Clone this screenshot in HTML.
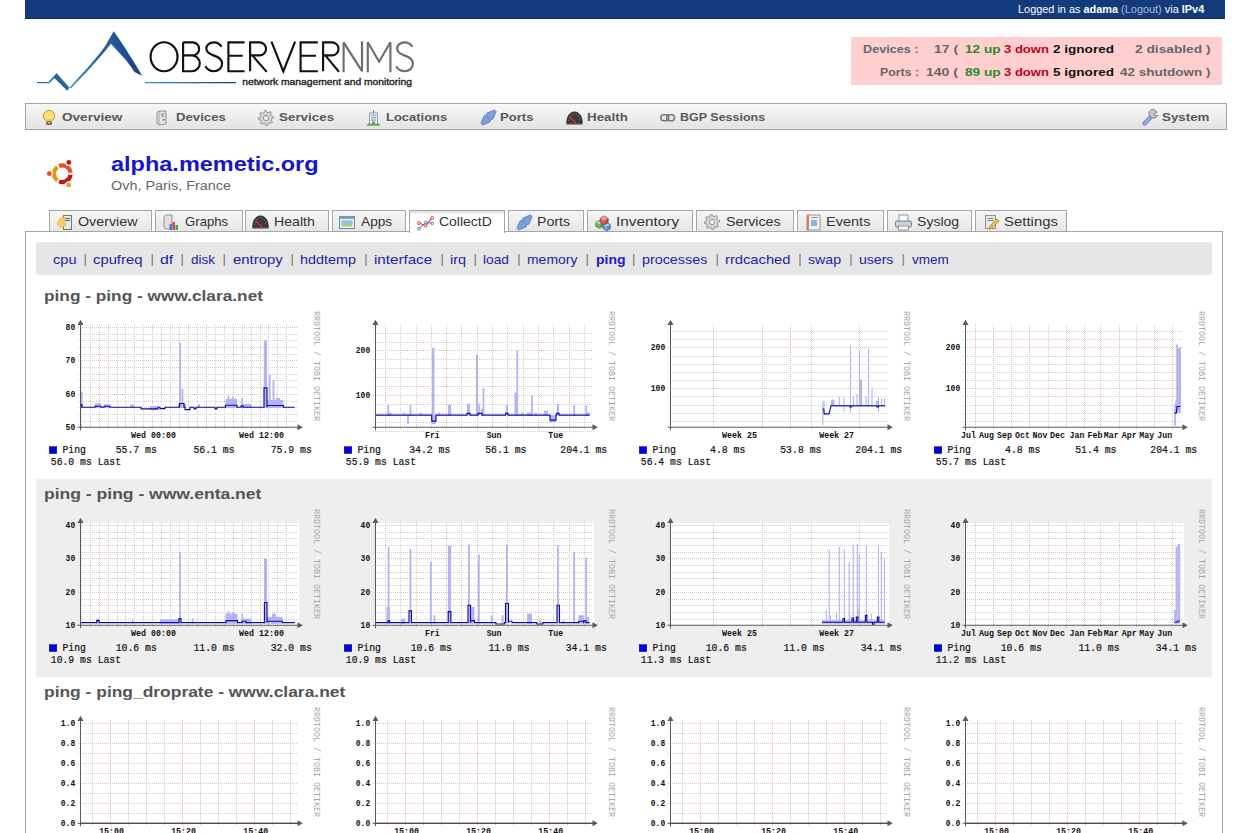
<!DOCTYPE html>
<html><head><meta charset="utf-8"><title>ObserverNMS</title>
<style>
html,body{margin:0;padding:0;background:#fff;width:1250px;height:833px;overflow:hidden;position:relative}
.t{position:absolute;white-space:pre;transform-origin:0 0}
.a{position:absolute}
</style></head><body>
<div class=a style="left:25px;top:0;width:1200px;background:#133a7a;border-bottom:1px solid #0f2a5c;height:18px"></div>
<svg class=a style="left:0;top:0" width="430" height="100" viewBox="0 0 430 100"><defs><linearGradient id="lg" x1="0" y1="0" x2="1" y2="0"><stop offset="0" stop-color="#2b86bd"/><stop offset="1" stop-color="#1b3d80"/></linearGradient><linearGradient id="ll" x1="0" y1="0" x2="1" y2="0"><stop offset="0" stop-color="#3b93c8"/><stop offset="1" stop-color="#1f3f82"/></linearGradient></defs><rect x="37" y="82" width="12" height="1.2" fill="#2a6e9e"/><path d="M48.8,81.8 L56.6,73.1 L69.5,87.8 L67.2,90.7 L54.3,78.1 L49.6,83 Z" fill="#22679d"/><path d="M69.5,87.8 C80,76 95,60 104.9,46.4 L113.7,31.2 C120,40 130,55 142.2,75.8 L134.4,72 C131,66 128,63 126.1,60.2 L110.9,43.8 C100,58 85,74 70.9,88.3 Z" fill="url(#lg)"/><rect x="145" y="82" width="91" height="1.3" fill="url(#ll)"/><ellipse cx="164.05" cy="56.75" rx="13.45" ry="14.5" fill="none" stroke="#111" stroke-width="2.15" stroke-linejoin="miter" stroke-linecap="butt"/><path d="M183.1,42.3 V71.2 H191.9 A7.9,7.9 0 0 0 191.9,55.4 H183.1 M183.1,55.4 H192.6 A6.45,6.45 0 0 0 192.6,42.3 H183.1" fill="none" stroke="#111" stroke-width="2.15" stroke-linejoin="miter" stroke-linecap="butt"/><path d="M221.6,46.8 C219.8,43.8 217.2,42.3 213.9,42.3 C209.6,42.3 206.3,44.9 206.3,48.6 C206.3,52.8 209.8,54.3 214,55.6 C218.6,57 222.1,59 222.1,63.7 C222.1,68.3 218.5,71.2 213.8,71.2 C209.8,71.2 207,69.3 205.4,66.3" fill="none" stroke="#111" stroke-width="2.15" stroke-linejoin="miter" stroke-linecap="butt"/><path d="M244.6,42.3 H228.4 V71.2 H244.6 M228.4,55.7 H242.8" fill="none" stroke="#111" stroke-width="2.15" stroke-linejoin="miter" stroke-linecap="butt"/><path d="M250.1,71.2 V42.3 H259.5 A6.45,6.45 0 0 1 259.5,55.4 H250.1 M252.3,55.4 L266.7,71.9" fill="none" stroke="#111" stroke-width="2.15" stroke-linejoin="miter" stroke-linecap="butt"/><path d="M271.5,41.6 L283.3,71.3 L295.1,41.6" fill="none" stroke="#111" stroke-width="2.15" stroke-linejoin="miter" stroke-linecap="butt"/><path d="M317.8,42.3 H300.6 V71.2 H317.8 M300.6,55.7 H316" fill="none" stroke="#111" stroke-width="2.15" stroke-linejoin="miter" stroke-linecap="butt"/><path d="M323.1,71.2 V42.3 H332 A6.45,6.45 0 0 1 332,55.4 H323.1 M325.3,55.4 L339,71.9" fill="none" stroke="#111" stroke-width="2.15" stroke-linejoin="miter" stroke-linecap="butt"/><path d="M343.6,72.3 V42.3 L362,71.2 V41.2" fill="none" stroke="#6e6e6e" stroke-width="2.15" stroke-linejoin="miter" stroke-miterlimit="2.5" stroke-linecap="butt"/><path d="M367.8,72.3 V42.3 L379.1,61.7 L390.4,42.3 V72.3" fill="none" stroke="#6e6e6e" stroke-width="2.15" stroke-linejoin="miter" stroke-miterlimit="2.5" stroke-linecap="butt"/><path d="M412.4,46.8 C410.6,43.8 408,42.3 404.7,42.3 C400.4,42.3 397.1,44.9 397.1,48.6 C397.1,52.8 400.6,54.3 404.8,55.6 C409.4,57 412.9,59 412.9,63.7 C412.9,68.3 409.3,71.2 404.6,71.2 C400.6,71.2 397.8,69.3 396.2,66.3" fill="none" stroke="#6e6e6e" stroke-width="2.15" stroke-linejoin="miter" stroke-miterlimit="2.5" stroke-linecap="butt"/><text x="242.2" y="85.4" font-family="Liberation Sans" font-weight="normal" font-size="9.6" fill="#222" stroke="#222" stroke-width="0.35" textLength="169.8" lengthAdjust="spacingAndGlyphs">network management and monitoring</text></svg>

<div class=a style="left:851px;top:37px;width:371px;height:48px;background:#ffcfcf"></div>
<div class=a style="left:25px;top:103px;width:1200px;height:25px;border:1px solid #a3a3a3;background:linear-gradient(#f7f7f7,#e3e3e3)"></div>
<div class=a style="left:25px;top:231px;width:1196px;height:620px;border:1px solid #a6a6a6;border-bottom:none"></div>
<div class=a style="left:49px;top:210px;width:101px;height:20px;border:1px solid #a6a6a6;border-bottom:none;background:linear-gradient(#f6f6f6,#e6e6e6)"></div>
<div class=a style="left:155px;top:210px;width:86px;height:20px;border:1px solid #a6a6a6;border-bottom:none;background:linear-gradient(#f6f6f6,#e6e6e6)"></div>
<div class=a style="left:245px;top:210px;width:82px;height:20px;border:1px solid #a6a6a6;border-bottom:none;background:linear-gradient(#f6f6f6,#e6e6e6)"></div>
<div class=a style="left:332px;top:210px;width:72px;height:20px;border:1px solid #a6a6a6;border-bottom:none;background:linear-gradient(#f6f6f6,#e6e6e6)"></div>
<div class=a style="left:409px;top:210px;width:94px;height:22px;border:1px solid #a6a6a6;border-bottom:none;background:linear-gradient(#dcdcdc 0px,#fff 4px)"></div>
<div class=a style="left:508px;top:210px;width:74px;height:20px;border:1px solid #a6a6a6;border-bottom:none;background:linear-gradient(#f6f6f6,#e6e6e6)"></div>
<div class=a style="left:587px;top:210px;width:104px;height:20px;border:1px solid #a6a6a6;border-bottom:none;background:linear-gradient(#f6f6f6,#e6e6e6)"></div>
<div class=a style="left:696px;top:210px;width:96px;height:20px;border:1px solid #a6a6a6;border-bottom:none;background:linear-gradient(#f6f6f6,#e6e6e6)"></div>
<div class=a style="left:797px;top:210px;width:85px;height:20px;border:1px solid #a6a6a6;border-bottom:none;background:linear-gradient(#f6f6f6,#e6e6e6)"></div>
<div class=a style="left:887px;top:210px;width:83px;height:20px;border:1px solid #a6a6a6;border-bottom:none;background:linear-gradient(#f6f6f6,#e6e6e6)"></div>
<div class=a style="left:975px;top:210px;width:90px;height:20px;border:1px solid #a6a6a6;border-bottom:none;background:linear-gradient(#f6f6f6,#e6e6e6)"></div>
<div class=a style="left:36px;top:242px;width:1176px;height:33px;background:#e6e6e6;border-radius:3px"></div>
<div class=a style="left:36px;top:479px;width:1176px;height:198px;background:#eeeeee"></div>
<svg class=a style="left:42px;top:109.5px" width="16" height="16" viewBox="0 0 16 16"><circle cx="7" cy="6" r="5.6" fill="#fbe27a" stroke="#c9932a" stroke-width="1"/><rect x="4.5" y="9" width="5" height="3" fill="#f1c928"/><rect x="4.3" y="11.5" width="5.4" height="3.3" rx="1" fill="#333"/><rect x="5.3" y="12.3" width="3.4" height="1.2" fill="#eee"/></svg>
<svg class=a style="left:155px;top:110px" width="16" height="16" viewBox="0 0 16 16"><path d="M2,2.5 L4,1 H11 V14 L4,15 L2,13.5 Z" fill="#e4e4e4" stroke="#8a8a8a" stroke-width="0.9"/><path d="M4,1 V15" stroke="#9a9a9a" stroke-width="0.8"/><rect x="6" y="3.5" width="3.5" height="0.9" fill="#777"/><rect x="6" y="5.5" width="3.5" height="0.9" fill="#777"/><rect x="7.8" y="9" width="1.6" height="1.6" fill="#666"/></svg>
<svg class=a style="left:257.5px;top:110px" width="16" height="16" viewBox="0 0 16 16"><polygon points="15.45,6.49 15.60,7.97 13.50,9.07 13.18,10.12 14.33,12.20 13.39,13.35 11.13,12.64 10.16,13.17 9.51,15.45 8.03,15.60 6.93,13.50 5.88,13.18 3.80,14.33 2.65,13.39 3.36,11.13 2.83,10.16 0.55,9.51 0.40,8.03 2.50,6.93 2.82,5.88 1.67,3.80 2.61,2.65 4.87,3.36 5.84,2.83 6.49,0.55 7.97,0.40 9.07,2.50 10.12,2.82 12.20,1.67 13.35,2.61 12.64,4.87 13.17,5.84" fill="#d8d8d8" stroke="#8f8f8f" stroke-width="1"/><circle cx="8" cy="8" r="2.6" fill="#f4f4f4" stroke="#8f8f8f" stroke-width="1"/></svg>
<svg class=a style="left:366px;top:109.5px" width="16" height="17" viewBox="0 0 16 17"><rect x="7" y="0.5" width="1" height="3" fill="#555"/><rect x="3.5" y="3" width="8" height="11" fill="#f2f6fb" stroke="#8a96a8" stroke-width="0.9"/><rect x="4.8" y="4.6" width="5.4" height="1.3" fill="#7fa6d8"/><rect x="4.8" y="7" width="5.4" height="1.3" fill="#7fa6d8"/><rect x="4.8" y="9.4" width="5.4" height="1.3" fill="#7fa6d8"/><rect x="6" y="11.5" width="3" height="2.5" fill="#8a8a8a"/><path d="M0.5,15.8 L3.5,12 V14 H11.5 V12 L14.5,15.8 Z" fill="#5fae4c"/></svg>
<svg class=a style="left:479.5px;top:109px" width="17" height="17" viewBox="0 0 17 17"><polygon points="2.63,16.07 4.54,15.29 10.13,12.81 10.62,10.62 12.81,10.13 15.29,4.54 16.07,2.63 14.37,0.93 12.46,1.71 6.87,4.19 6.38,6.38 4.19,6.87 1.71,12.46 0.93,14.37" fill="#7f9fe2" stroke="#4f6fb8" stroke-width="0.8" stroke-linejoin="round"/><path d="M6.6,7.2 L9.8,10.4" stroke="#5a8a88" stroke-width="1"/></svg>
<svg class=a style="left:565.5px;top:110px" width="17" height="16" viewBox="0 0 17 16"><path d="M0.8,13.2 C0.8,6 4,2 8.5,2 C13,2 16.2,6 16.2,13.2 Z" fill="#3c3c3c" stroke="#222" stroke-width="0.9"/><path d="M3,11 C3,6.5 5.3,4 8.5,4 C11.7,4 14,6.5 14,11" fill="none" stroke="#999" stroke-width="0.7" stroke-dasharray="0.8 1.4"/><path d="M3.5,6.5 L10,13" stroke="#e03030" stroke-width="1.3"/><rect x="0.5" y="13" width="16" height="1.6" fill="#555"/></svg>
<svg class=a style="left:660px;top:109.5px" width="16" height="16" viewBox="0 0 16 16"><rect x="0.8" y="4.8" width="8" height="6" rx="3" fill="none" stroke="#777" stroke-width="1.5"/><rect x="6.5" y="4.8" width="8" height="6" rx="3" fill="none" stroke="#777" stroke-width="1.5"/></svg>
<svg class=a style="left:1141.5px;top:109px" width="17" height="17" viewBox="0 0 17 17"><path d="M2.5,14.5 L9.5,7.5" stroke="#5c7fc7" stroke-width="4" stroke-linecap="round"/><path d="M2.5,14.5 L9.5,7.5" stroke="#9db4ea" stroke-width="2.2" stroke-linecap="round"/><path d="M9,8 A4,4 0 1 1 14.8,3.8 L12.5,4.6 L12,6 L13.5,7 L15.6,6 A4,4 0 0 1 9,8 Z" fill="#c8c8c8" stroke="#7b7b7b" stroke-width="0.9"/></svg>
<svg class=a style="left:56px;top:213.5px" width="17" height="17" viewBox="0 0 17 17"><rect x="7.5" y="1.5" width="8" height="14" fill="#e3e8e6" stroke="#777" stroke-width="1"/><rect x="9" y="4" width="5" height="1" fill="#666"/><rect x="9" y="6" width="5" height="1" fill="#666"/><path d="M1,10 L5,3.5 L9.5,4 L8,8 L10,11 L5,14 Z" fill="#f3d060" stroke="#e0b840" stroke-width="0.8"/></svg>
<svg class=a style="left:162.5px;top:213.5px" width="17" height="17" viewBox="0 0 17 17"><path d="M1,2.5 L3,1 H9 V14 L3,15 L1,13.5 Z" fill="#e0e0e0" stroke="#8a8a8a" stroke-width="0.9"/><rect x="6.5" y="10" width="2.5" height="6" fill="#3a7ee0"/><rect x="9.5" y="8" width="2.5" height="8" fill="#e04040"/><rect x="12.5" y="11" width="2.5" height="5" fill="#3cb34a"/></svg>
<svg class=a style="left:252px;top:214px" width="17" height="16" viewBox="0 0 17 16"><path d="M0.8,13.2 C0.8,6 4,2 8.5,2 C13,2 16.2,6 16.2,13.2 Z" fill="#3c3c3c" stroke="#222" stroke-width="0.9"/><path d="M3,11 C3,6.5 5.3,4 8.5,4 C11.7,4 14,6.5 14,11" fill="none" stroke="#999" stroke-width="0.7" stroke-dasharray="0.8 1.4"/><path d="M3.5,6.5 L10,13" stroke="#e03030" stroke-width="1.3"/><rect x="0.5" y="13" width="16" height="1.6" fill="#555"/></svg>
<svg class=a style="left:339px;top:213.5px" width="16" height="16" viewBox="0 0 16 16"><rect x="0.5" y="2.5" width="15" height="12" fill="#f4f4f4" stroke="#6f88aa" stroke-width="1"/><rect x="0.5" y="2.5" width="15" height="2.5" fill="#7f9cc8"/><rect x="2.5" y="6.5" width="11" height="6" fill="#9fd08a"/><rect x="2.5" y="6.5" width="11" height="3" fill="#8cc0e8"/></svg>
<svg class=a style="left:416.5px;top:213.5px" width="17" height="17" viewBox="0 0 17 17"><path d="M2,14.7 L8.7,8.4 L15.2,9.2" fill="none" stroke="#4a70c0" stroke-width="1"/><path d="M2,9.1 L8.7,11.7 L15.2,3.9" fill="none" stroke="#dd3a3a" stroke-width="1.1"/><circle cx="2" cy="14.7" r="1.3" fill="#fff" stroke="#4a70c0" stroke-width="0.9"/><circle cx="8.7" cy="8.4" r="1.3" fill="#fff" stroke="#4a70c0" stroke-width="0.9"/><circle cx="15.2" cy="9.2" r="1.3" fill="#fff" stroke="#4a70c0" stroke-width="0.9"/><circle cx="2" cy="9.1" r="1.4" fill="#fff" stroke="#dd3a3a" stroke-width="1"/><circle cx="8.7" cy="11.7" r="1.4" fill="#fff" stroke="#dd3a3a" stroke-width="1"/><circle cx="15.2" cy="3.9" r="1.4" fill="#fff" stroke="#dd3a3a" stroke-width="1"/></svg>
<svg class=a style="left:515.5px;top:213.5px" width="17" height="17" viewBox="0 0 17 17"><polygon points="2.63,16.07 4.54,15.29 10.13,12.81 10.62,10.62 12.81,10.13 15.29,4.54 16.07,2.63 14.37,0.93 12.46,1.71 6.87,4.19 6.38,6.38 4.19,6.87 1.71,12.46 0.93,14.37" fill="#7f9fe2" stroke="#4f6fb8" stroke-width="0.8" stroke-linejoin="round"/><path d="M6.6,7.2 L9.8,10.4" stroke="#5a8a88" stroke-width="1"/></svg>
<svg class=a style="left:594.5px;top:213.5px" width="17" height="18" viewBox="0 0 17 18"><polygon points="4.30,6.10 7.95,8.20 4.30,10.30 0.65,8.20" fill="#a8dca0"/><polygon points="0.65,8.20 4.30,10.30 4.30,14.50 0.65,12.40" fill="#6cb860"/><polygon points="4.30,10.30 7.95,8.20 7.95,12.40 4.30,14.50" fill="#58a04c"/><polygon points="4.30,6.10 7.95,8.20 7.95,12.40 4.30,14.50 0.65,12.40 0.65,8.20" fill="none" stroke="#4a8a40" stroke-width="0.7"/><polygon points="11.60,8.30 15.34,10.45 11.60,12.60 7.86,10.45" fill="#a8c8f0"/><polygon points="7.86,10.45 11.60,12.60 11.60,16.90 7.86,14.75" fill="#6f9fd8"/><polygon points="11.60,12.60 15.34,10.45 15.34,14.75 11.60,16.90" fill="#5a88c4"/><polygon points="11.60,8.30 15.34,10.45 15.34,14.75 11.60,16.90 7.86,14.75 7.86,10.45" fill="none" stroke="#3f6aa0" stroke-width="0.7"/><polygon points="9.20,1.90 13.11,4.15 9.20,6.40 5.28,4.15" fill="#f4a0a0"/><polygon points="5.28,4.15 9.20,6.40 9.20,10.90 5.28,8.65" fill="#e05a5a"/><polygon points="9.20,6.40 13.11,4.15 13.11,8.65 9.20,10.90" fill="#c84848"/><polygon points="9.20,1.90 13.11,4.15 13.11,8.65 9.20,10.90 5.28,8.65 5.28,4.15" fill="none" stroke="#a03030" stroke-width="0.7"/></svg>
<svg class=a style="left:704px;top:214px" width="16" height="16" viewBox="0 0 16 16"><polygon points="15.45,6.49 15.60,7.97 13.50,9.07 13.18,10.12 14.33,12.20 13.39,13.35 11.13,12.64 10.16,13.17 9.51,15.45 8.03,15.60 6.93,13.50 5.88,13.18 3.80,14.33 2.65,13.39 3.36,11.13 2.83,10.16 0.55,9.51 0.40,8.03 2.50,6.93 2.82,5.88 1.67,3.80 2.61,2.65 4.87,3.36 5.84,2.83 6.49,0.55 7.97,0.40 9.07,2.50 10.12,2.82 12.20,1.67 13.35,2.61 12.64,4.87 13.17,5.84" fill="#d8d8d8" stroke="#8f8f8f" stroke-width="1"/><circle cx="8" cy="8" r="2.6" fill="#f4f4f4" stroke="#8f8f8f" stroke-width="1"/></svg>
<svg class=a style="left:806px;top:213.5px" width="15" height="17" viewBox="0 0 15 17"><rect x="1" y="1" width="13" height="15" fill="#eef2f6" stroke="#8a8a8a" stroke-width="0.9"/><rect x="1" y="1" width="2" height="15" fill="#d88040"/><rect x="5" y="6" width="6" height="6" fill="#8ab4e0"/><rect x="5" y="3" width="7" height="1" fill="#999"/></svg>
<svg class=a style="left:894.5px;top:213.5px" width="17" height="17" viewBox="0 0 17 17"><rect x="4" y="1" width="9" height="7" fill="#fff" stroke="#888" stroke-width="0.9"/><rect x="0.5" y="7" width="16" height="6" rx="1.5" fill="#c8d4e0" stroke="#6a7a8a" stroke-width="1"/><rect x="3.5" y="12" width="10" height="4" fill="#fff" stroke="#888" stroke-width="0.9"/></svg>
<svg class=a style="left:983.5px;top:213.5px" width="16" height="17" viewBox="0 0 16 17"><rect x="1.5" y="1.5" width="10" height="13" fill="#e8e8e8" stroke="#888" stroke-width="0.9"/><rect x="3.5" y="4" width="6" height="1" fill="#888"/><rect x="3.5" y="6" width="6" height="1" fill="#888"/><path d="M5,15.5 L6,12 L13,5 L15,7 L8,14 Z" fill="#f0c040" stroke="#b08020" stroke-width="0.8"/></svg>
<svg class=a style="left:46px;top:159px" width="32" height="30" viewBox="0 0 32 30"><path d="M13.06,7.06 A8.3,8.3 0 0 1 24.54,13.69" fill="none" stroke="#e4541c" stroke-width="4.2"/><path d="M24.54,15.71 A8.3,8.3 0 0 1 13.06,22.34" fill="none" stroke="#c81414" stroke-width="4.2"/><path d="M11.30,21.33 A8.3,8.3 0 0 1 11.30,8.07" fill="none" stroke="#f39012" stroke-width="4.2"/><circle cx="3.30" cy="14.70" r="3.6" fill="#fff"/><circle cx="3.30" cy="14.70" r="2.4" fill="#e24c1c"/><circle cx="22.80" cy="3.44" r="3.6" fill="#fff"/><circle cx="22.80" cy="3.44" r="2.4" fill="#cc1212"/><circle cx="22.80" cy="25.96" r="3.6" fill="#fff"/><circle cx="22.80" cy="25.96" r="2.4" fill="#f0a020"/></svg>
<svg class=a style="left:0;top:0" width="1250" height="833" viewBox="0 0 1250 833" shape-rendering="auto">
<rect x="80.5" y="325.0" width="218.5" height="102.30000000000001" fill="#fff"/>
<path d="M78,421.50H298.0" stroke="#cfcfcf" stroke-width="1" stroke-dasharray="1 1"/>
<path d="M78,414.50H298.0" stroke="#cfcfcf" stroke-width="1" stroke-dasharray="1 1"/>
<path d="M78,407.50H298.0" stroke="#cfcfcf" stroke-width="1" stroke-dasharray="1 1"/>
<path d="M78,401.50H298.0" stroke="#cfcfcf" stroke-width="1" stroke-dasharray="1 1"/>
<path d="M78,387.50H298.0" stroke="#cfcfcf" stroke-width="1" stroke-dasharray="1 1"/>
<path d="M78,380.50H298.0" stroke="#cfcfcf" stroke-width="1" stroke-dasharray="1 1"/>
<path d="M78,374.50H298.0" stroke="#cfcfcf" stroke-width="1" stroke-dasharray="1 1"/>
<path d="M78,367.50H298.0" stroke="#cfcfcf" stroke-width="1" stroke-dasharray="1 1"/>
<path d="M78,354.50H298.0" stroke="#cfcfcf" stroke-width="1" stroke-dasharray="1 1"/>
<path d="M78,347.50H298.0" stroke="#cfcfcf" stroke-width="1" stroke-dasharray="1 1"/>
<path d="M78,340.50H298.0" stroke="#cfcfcf" stroke-width="1" stroke-dasharray="1 1"/>
<path d="M78,334.50H298.0" stroke="#cfcfcf" stroke-width="1" stroke-dasharray="1 1"/>
<path d="M81.50,324V429.3" stroke="#cfcfcf" stroke-width="1" stroke-dasharray="1 1"/>
<path d="M90.50,324V429.3" stroke="#cfcfcf" stroke-width="1" stroke-dasharray="1 1"/>
<path d="M108.50,324V429.3" stroke="#cfcfcf" stroke-width="1" stroke-dasharray="1 1"/>
<path d="M117.50,324V429.3" stroke="#cfcfcf" stroke-width="1" stroke-dasharray="1 1"/>
<path d="M125.50,324V429.3" stroke="#cfcfcf" stroke-width="1" stroke-dasharray="1 1"/>
<path d="M134.50,324V429.3" stroke="#cfcfcf" stroke-width="1" stroke-dasharray="1 1"/>
<path d="M143.50,324V429.3" stroke="#cfcfcf" stroke-width="1" stroke-dasharray="1 1"/>
<path d="M161.50,324V429.3" stroke="#cfcfcf" stroke-width="1" stroke-dasharray="1 1"/>
<path d="M170.50,324V429.3" stroke="#cfcfcf" stroke-width="1" stroke-dasharray="1 1"/>
<path d="M179.50,324V429.3" stroke="#cfcfcf" stroke-width="1" stroke-dasharray="1 1"/>
<path d="M188.50,324V429.3" stroke="#cfcfcf" stroke-width="1" stroke-dasharray="1 1"/>
<path d="M197.50,324V429.3" stroke="#cfcfcf" stroke-width="1" stroke-dasharray="1 1"/>
<path d="M215.50,324V429.3" stroke="#cfcfcf" stroke-width="1" stroke-dasharray="1 1"/>
<path d="M224.50,324V429.3" stroke="#cfcfcf" stroke-width="1" stroke-dasharray="1 1"/>
<path d="M233.50,324V429.3" stroke="#cfcfcf" stroke-width="1" stroke-dasharray="1 1"/>
<path d="M242.50,324V429.3" stroke="#cfcfcf" stroke-width="1" stroke-dasharray="1 1"/>
<path d="M251.50,324V429.3" stroke="#cfcfcf" stroke-width="1" stroke-dasharray="1 1"/>
<path d="M268.50,324V429.3" stroke="#cfcfcf" stroke-width="1" stroke-dasharray="1 1"/>
<path d="M277.50,324V429.3" stroke="#cfcfcf" stroke-width="1" stroke-dasharray="1 1"/>
<path d="M286.50,324V429.3" stroke="#cfcfcf" stroke-width="1" stroke-dasharray="1 1"/>
<path d="M78,394.50H298.0" stroke="#e6bebe" stroke-width="1" stroke-dasharray="1 1"/>
<path d="M78,360.50H298.0" stroke="#e6bebe" stroke-width="1" stroke-dasharray="1 1"/>
<path d="M78,327.50H298.0" stroke="#e6bebe" stroke-width="1" stroke-dasharray="1 1"/>
<path d="M99.50,324V430.3" stroke="#e6bebe" stroke-width="1" stroke-dasharray="1 1"/>
<path d="M152.50,324V430.3" stroke="#e6bebe" stroke-width="1" stroke-dasharray="1 1"/>
<path d="M206.50,324V430.3" stroke="#e6bebe" stroke-width="1" stroke-dasharray="1 1"/>
<path d="M260.50,324V430.3" stroke="#e6bebe" stroke-width="1" stroke-dasharray="1 1"/>
<rect x="80.75" y="391.86" width="1.80" height="16.05" fill="#b3b3ee"/>
<rect x="95.00" y="403.23" width="6.00" height="4.68" fill="#b3b3ee"/>
<rect x="104.00" y="404.23" width="6.00" height="3.68" fill="#b3b3ee"/>
<rect x="130.00" y="404.57" width="4.00" height="3.34" fill="#b3b3ee"/>
<rect x="150.00" y="405.90" width="8.00" height="4.01" fill="#b3b3ee"/>
<rect x="179.25" y="342.71" width="1.80" height="65.20" fill="#b3b3ee"/>
<rect x="181.60" y="388.85" width="1.80" height="19.06" fill="#b3b3ee"/>
<rect x="178.00" y="403.90" width="8.00" height="4.01" fill="#b3b3ee"/>
<rect x="198.00" y="404.23" width="2.00" height="3.68" fill="#b3b3ee"/>
<rect x="225.50" y="398.88" width="11.50" height="9.03" fill="#b3b3ee"/>
<rect x="227.60" y="395.54" width="1.80" height="12.37" fill="#b3b3ee"/>
<rect x="231.60" y="396.54" width="1.80" height="11.37" fill="#b3b3ee"/>
<rect x="241.20" y="397.88" width="1.80" height="10.03" fill="#b3b3ee"/>
<rect x="243.00" y="403.90" width="8.50" height="4.01" fill="#b3b3ee"/>
<rect x="263.80" y="340.37" width="3.20" height="67.54" fill="#b3b3ee"/>
<rect x="268.80" y="374.48" width="1.80" height="33.43" fill="#b3b3ee"/>
<rect x="272.60" y="380.49" width="1.80" height="27.42" fill="#b3b3ee"/>
<rect x="267.00" y="399.88" width="16.50" height="8.02" fill="#b3b3ee"/>
<rect x="276.00" y="397.88" width="4.00" height="10.03" fill="#b3b3ee"/>
<polyline points="80.80,407.24 80.80,407.24 80.80,404.57 82.00,404.57 82.00,407.24 95.00,407.24 95.00,406.24 101.00,406.24 101.00,407.24 104.00,407.24 104.00,406.24 110.00,406.24 110.00,407.24 141.00,407.24 141.00,408.91 158.00,408.91 158.00,407.24 160.00,407.24 160.00,408.58 165.00,408.58 165.00,407.24 179.50,407.24 179.50,403.56 184.00,403.56 184.00,407.24 185.00,407.24 185.00,409.58 190.00,409.58 190.00,407.24 194.00,407.24 194.00,408.91 196.00,408.91 196.00,407.24 215.00,407.24 215.00,408.91 217.00,408.91 217.00,407.24 225.50,407.24 225.50,405.23 237.00,405.23 237.00,407.24 241.00,407.24 241.00,405.90 243.00,405.90 243.00,407.24 264.00,407.24 264.00,387.85 267.00,387.85 267.00,407.24 267.00,407.24 267.00,405.57 283.50,405.57 283.50,407.24 294.60,407.24" fill="none" stroke="#0a0aa8" stroke-width="1.1" stroke-linejoin="miter"/>

<path d="M80.5,430.3V323.5" stroke="#5a5a5a" stroke-width="1"/>
<path d="M77.5,427.3H299.5" stroke="#5a5a5a" stroke-width="1.1"/>
<path d="M77.5,325.0L80.5,319.8L83.5,325.0Z" fill="#5a5a5a"/>
<path d="M297.5,424.3L302.8,427.3L297.5,430.3Z" fill="#5a5a5a"/>
<text x="75.2" y="329.90" text-anchor="end" font-family="Liberation Mono" font-weight="bold" font-size="8.6" fill="#111" textLength="9.6" lengthAdjust="spacingAndGlyphs">80</text>
<text x="75.2" y="363.33" text-anchor="end" font-family="Liberation Mono" font-weight="bold" font-size="8.6" fill="#111" textLength="9.6" lengthAdjust="spacingAndGlyphs">70</text>
<text x="75.2" y="396.77" text-anchor="end" font-family="Liberation Mono" font-weight="bold" font-size="8.6" fill="#111" textLength="9.6" lengthAdjust="spacingAndGlyphs">60</text>
<text x="75.2" y="430.20" text-anchor="end" font-family="Liberation Mono" font-weight="bold" font-size="8.6" fill="#111" textLength="9.6" lengthAdjust="spacingAndGlyphs">50</text>
<text x="131.09" y="437.90" font-family="Liberation Mono" font-weight="bold" font-size="8.3" fill="#111" textLength="44.8" lengthAdjust="spacingAndGlyphs">Wed 00:00</text>
<text x="239.09" y="437.90" font-family="Liberation Mono" font-weight="bold" font-size="8.3" fill="#111" textLength="44.8" lengthAdjust="spacingAndGlyphs">Wed 12:00</text>
<text transform="translate(314.2,311.0) rotate(90)" font-family="Liberation Mono" font-size="8.3" fill="#a8a8a8" textLength="110" lengthAdjust="spacingAndGlyphs">RRDTOOL / TOBI OETIKER</text>
<rect x="49.2" y="446.6" width="7.6" height="7" fill="#0000e6" stroke="#000080" stroke-width="0.4"/>
<text x="62.40" y="453.40" font-family="Liberation Mono" font-size="10.6" fill="#111" stroke="#111" stroke-width="0.2" textLength="23.5" lengthAdjust="spacingAndGlyphs">Ping</text>
<text x="115.70" y="453.40" font-family="Liberation Mono" font-size="10.6" fill="#111" stroke="#111" stroke-width="0.2" textLength="41.2" lengthAdjust="spacingAndGlyphs">55.7 ms</text>
<text x="193.40" y="453.40" font-family="Liberation Mono" font-size="10.6" fill="#111" stroke="#111" stroke-width="0.2" textLength="41.2" lengthAdjust="spacingAndGlyphs">56.1 ms</text>
<text x="270.70" y="453.40" font-family="Liberation Mono" font-size="10.6" fill="#111" stroke="#111" stroke-width="0.2" textLength="41.2" lengthAdjust="spacingAndGlyphs">75.9 ms</text>
<text x="50.80" y="465.10" font-family="Liberation Mono" font-size="10.6" fill="#111" stroke="#111" stroke-width="0.2" textLength="70.3" lengthAdjust="spacingAndGlyphs">56.0 ms Last</text>
<rect x="375.5" y="325.0" width="218.5" height="102.30000000000001" fill="#fff"/>
<path d="M373,431.50H593.0" stroke="#cfcfcf" stroke-width="1" stroke-dasharray="1 1"/>
<path d="M373,422.50H593.0" stroke="#cfcfcf" stroke-width="1" stroke-dasharray="1 1"/>
<path d="M373,413.50H593.0" stroke="#cfcfcf" stroke-width="1" stroke-dasharray="1 1"/>
<path d="M373,404.50H593.0" stroke="#cfcfcf" stroke-width="1" stroke-dasharray="1 1"/>
<path d="M373,386.50H593.0" stroke="#cfcfcf" stroke-width="1" stroke-dasharray="1 1"/>
<path d="M373,377.50H593.0" stroke="#cfcfcf" stroke-width="1" stroke-dasharray="1 1"/>
<path d="M373,368.50H593.0" stroke="#cfcfcf" stroke-width="1" stroke-dasharray="1 1"/>
<path d="M373,359.50H593.0" stroke="#cfcfcf" stroke-width="1" stroke-dasharray="1 1"/>
<path d="M373,342.50H593.0" stroke="#cfcfcf" stroke-width="1" stroke-dasharray="1 1"/>
<path d="M373,333.50H593.0" stroke="#cfcfcf" stroke-width="1" stroke-dasharray="1 1"/>
<path d="M400.50,324V429.3" stroke="#cfcfcf" stroke-width="1" stroke-dasharray="1 1"/>
<path d="M431.50,324V429.3" stroke="#cfcfcf" stroke-width="1" stroke-dasharray="1 1"/>
<path d="M461.50,324V429.3" stroke="#cfcfcf" stroke-width="1" stroke-dasharray="1 1"/>
<path d="M492.50,324V429.3" stroke="#cfcfcf" stroke-width="1" stroke-dasharray="1 1"/>
<path d="M523.50,324V429.3" stroke="#cfcfcf" stroke-width="1" stroke-dasharray="1 1"/>
<path d="M553.50,324V429.3" stroke="#cfcfcf" stroke-width="1" stroke-dasharray="1 1"/>
<path d="M584.50,324V429.3" stroke="#cfcfcf" stroke-width="1" stroke-dasharray="1 1"/>
<path d="M373,395.50H593.0" stroke="#e6bebe" stroke-width="1" stroke-dasharray="1 1"/>
<path d="M373,350.50H593.0" stroke="#e6bebe" stroke-width="1" stroke-dasharray="1 1"/>
<path d="M385.50,324V430.3" stroke="#e6bebe" stroke-width="1" stroke-dasharray="1 1"/>
<path d="M416.50,324V430.3" stroke="#e6bebe" stroke-width="1" stroke-dasharray="1 1"/>
<path d="M446.50,324V430.3" stroke="#e6bebe" stroke-width="1" stroke-dasharray="1 1"/>
<path d="M477.50,324V430.3" stroke="#e6bebe" stroke-width="1" stroke-dasharray="1 1"/>
<path d="M507.50,324V430.3" stroke="#e6bebe" stroke-width="1" stroke-dasharray="1 1"/>
<path d="M538.50,324V430.3" stroke="#e6bebe" stroke-width="1" stroke-dasharray="1 1"/>
<path d="M569.50,324V430.3" stroke="#e6bebe" stroke-width="1" stroke-dasharray="1 1"/>
<rect x="387.35" y="404.84" width="1.80" height="10.56" fill="#b3b3ee"/>
<rect x="386.80" y="412.70" width="4.80" height="2.70" fill="#b3b3ee"/>
<rect x="402.85" y="412.48" width="1.80" height="2.92" fill="#b3b3ee"/>
<rect x="409.60" y="404.84" width="1.80" height="10.56" fill="#b3b3ee"/>
<rect x="419.85" y="412.48" width="1.80" height="2.92" fill="#b3b3ee"/>
<rect x="432.00" y="347.80" width="2.50" height="67.60" fill="#b3b3ee"/>
<rect x="438.35" y="412.48" width="1.80" height="2.92" fill="#b3b3ee"/>
<rect x="448.00" y="404.84" width="3.00" height="10.56" fill="#b3b3ee"/>
<rect x="467.00" y="403.49" width="3.00" height="11.90" fill="#b3b3ee"/>
<rect x="476.00" y="354.98" width="2.00" height="60.41" fill="#b3b3ee"/>
<rect x="478.35" y="403.49" width="1.80" height="11.90" fill="#b3b3ee"/>
<rect x="482.60" y="387.77" width="1.80" height="27.62" fill="#b3b3ee"/>
<rect x="481.00" y="408.88" width="2.00" height="6.51" fill="#b3b3ee"/>
<rect x="506.00" y="404.84" width="2.00" height="10.56" fill="#b3b3ee"/>
<rect x="514.50" y="392.71" width="3.00" height="22.68" fill="#b3b3ee"/>
<rect x="516.35" y="350.94" width="1.80" height="64.46" fill="#b3b3ee"/>
<rect x="520.85" y="412.48" width="1.80" height="2.92" fill="#b3b3ee"/>
<rect x="527.00" y="412.48" width="5.00" height="2.92" fill="#b3b3ee"/>
<rect x="531.10" y="395.41" width="1.80" height="19.99" fill="#b3b3ee"/>
<rect x="534.85" y="412.48" width="1.80" height="2.92" fill="#b3b3ee"/>
<rect x="544.00" y="410.68" width="4.00" height="4.72" fill="#b3b3ee"/>
<rect x="557.00" y="404.39" width="2.00" height="11.00" fill="#b3b3ee"/>
<rect x="573.35" y="405.29" width="1.80" height="10.11" fill="#b3b3ee"/>
<rect x="585.35" y="405.29" width="1.80" height="10.11" fill="#b3b3ee"/>
<rect x="586.00" y="412.48" width="4.00" height="2.92" fill="#b3b3ee"/>
<rect x="407.10" y="415.17" width="1.80" height="8.53" fill="#b3b3ee"/>
<rect x="431.50" y="415.17" width="4.50" height="8.98" fill="#b3b3ee"/>
<rect x="550.00" y="415.17" width="6.00" height="7.19" fill="#b3b3ee"/>
<polyline points="376.00,415.08 431.70,415.08 431.70,421.10 436.00,421.10 436.00,415.08 467.00,415.08 467.00,413.38 470.00,413.38 470.00,415.08 478.00,415.08 478.00,413.38 482.00,413.38 482.00,415.08 505.50,415.08 505.50,413.38 508.00,413.38 508.00,415.08 550.00,415.08 550.00,420.11 556.00,420.11 556.00,415.08 556.50,415.08 556.50,413.38 559.00,413.38 559.00,415.08 589.60,415.08" fill="none" stroke="#0a0aa8" stroke-width="1.1" stroke-linejoin="miter"/>

<path d="M375.5,430.3V323.5" stroke="#5a5a5a" stroke-width="1"/>
<path d="M372.5,427.3H594.5" stroke="#5a5a5a" stroke-width="1.1"/>
<path d="M372.5,325.0L375.5,319.8L378.5,325.0Z" fill="#5a5a5a"/>
<path d="M592.5,424.3L597.8,427.3L592.5,430.3Z" fill="#5a5a5a"/>
<text x="370.2" y="353.39" text-anchor="end" font-family="Liberation Mono" font-weight="bold" font-size="8.6" fill="#111" textLength="14.4" lengthAdjust="spacingAndGlyphs">200</text>
<text x="370.2" y="398.31" text-anchor="end" font-family="Liberation Mono" font-weight="bold" font-size="8.6" fill="#111" textLength="14.4" lengthAdjust="spacingAndGlyphs">100</text>
<text x="424.93" y="437.90" font-family="Liberation Mono" font-weight="bold" font-size="8.3" fill="#111" textLength="14.9" lengthAdjust="spacingAndGlyphs">Fri</text>
<text x="486.63" y="437.90" font-family="Liberation Mono" font-weight="bold" font-size="8.3" fill="#111" textLength="14.9" lengthAdjust="spacingAndGlyphs">Sun</text>
<text x="548.23" y="437.90" font-family="Liberation Mono" font-weight="bold" font-size="8.3" fill="#111" textLength="14.9" lengthAdjust="spacingAndGlyphs">Tue</text>
<text transform="translate(609.2,311.0) rotate(90)" font-family="Liberation Mono" font-size="8.3" fill="#a8a8a8" textLength="110" lengthAdjust="spacingAndGlyphs">RRDTOOL / TOBI OETIKER</text>
<rect x="344.2" y="446.6" width="7.6" height="7" fill="#0000e6" stroke="#000080" stroke-width="0.4"/>
<text x="357.40" y="453.40" font-family="Liberation Mono" font-size="10.6" fill="#111" stroke="#111" stroke-width="0.2" textLength="23.5" lengthAdjust="spacingAndGlyphs">Ping</text>
<text x="409.14" y="453.40" font-family="Liberation Mono" font-size="10.6" fill="#111" stroke="#111" stroke-width="0.2" textLength="41.2" lengthAdjust="spacingAndGlyphs">34.2 ms</text>
<text x="485.24" y="453.40" font-family="Liberation Mono" font-size="10.6" fill="#111" stroke="#111" stroke-width="0.2" textLength="41.2" lengthAdjust="spacingAndGlyphs">56.1 ms</text>
<text x="560.26" y="453.40" font-family="Liberation Mono" font-size="10.6" fill="#111" stroke="#111" stroke-width="0.2" textLength="47.0" lengthAdjust="spacingAndGlyphs">204.1 ms</text>
<text x="345.80" y="465.10" font-family="Liberation Mono" font-size="10.6" fill="#111" stroke="#111" stroke-width="0.2" textLength="70.3" lengthAdjust="spacingAndGlyphs">55.9 ms Last</text>
<rect x="670.5" y="325.0" width="218.5" height="102.30000000000001" fill="#fff"/>
<path d="M668,421.50H888.0" stroke="#cfcfcf" stroke-width="1" stroke-dasharray="1 1"/>
<path d="M668,413.50H888.0" stroke="#cfcfcf" stroke-width="1" stroke-dasharray="1 1"/>
<path d="M668,405.50H888.0" stroke="#cfcfcf" stroke-width="1" stroke-dasharray="1 1"/>
<path d="M668,396.50H888.0" stroke="#cfcfcf" stroke-width="1" stroke-dasharray="1 1"/>
<path d="M668,380.50H888.0" stroke="#cfcfcf" stroke-width="1" stroke-dasharray="1 1"/>
<path d="M668,372.50H888.0" stroke="#cfcfcf" stroke-width="1" stroke-dasharray="1 1"/>
<path d="M668,364.50H888.0" stroke="#cfcfcf" stroke-width="1" stroke-dasharray="1 1"/>
<path d="M668,356.50H888.0" stroke="#cfcfcf" stroke-width="1" stroke-dasharray="1 1"/>
<path d="M668,339.50H888.0" stroke="#cfcfcf" stroke-width="1" stroke-dasharray="1 1"/>
<path d="M668,331.50H888.0" stroke="#cfcfcf" stroke-width="1" stroke-dasharray="1 1"/>
<path d="M713.50,324V429.3" stroke="#cfcfcf" stroke-width="1" stroke-dasharray="1 1"/>
<path d="M762.50,324V429.3" stroke="#cfcfcf" stroke-width="1" stroke-dasharray="1 1"/>
<path d="M811.50,324V429.3" stroke="#cfcfcf" stroke-width="1" stroke-dasharray="1 1"/>
<path d="M859.50,324V429.3" stroke="#cfcfcf" stroke-width="1" stroke-dasharray="1 1"/>
<path d="M668,388.50H888.0" stroke="#e6bebe" stroke-width="1" stroke-dasharray="1 1"/>
<path d="M668,347.50H888.0" stroke="#e6bebe" stroke-width="1" stroke-dasharray="1 1"/>
<path d="M790.50,324V430.3" stroke="#e6bebe" stroke-width="1" stroke-dasharray="1 1"/>
<rect x="822.35" y="400.86" width="1.10" height="24.08" fill="#b3b3ee"/>
<rect x="823.45" y="400.86" width="1.10" height="13.06" fill="#b3b3ee"/>
<rect x="831.00" y="399.63" width="3.50" height="6.94" fill="#b3b3ee"/>
<rect x="834.00" y="404.94" width="51.00" height="1.63" fill="#b3b3ee"/>
<rect x="838.95" y="396.78" width="1.10" height="9.79" fill="#b3b3ee"/>
<rect x="843.45" y="396.78" width="1.10" height="14.69" fill="#b3b3ee"/>
<rect x="849.95" y="344.55" width="1.10" height="68.15" fill="#b3b3ee"/>
<rect x="852.95" y="396.78" width="1.10" height="9.79" fill="#b3b3ee"/>
<rect x="856.45" y="393.92" width="1.10" height="12.65" fill="#b3b3ee"/>
<rect x="858.95" y="350.67" width="1.10" height="55.90" fill="#b3b3ee"/>
<rect x="860.00" y="379.64" width="2.00" height="26.93" fill="#b3b3ee"/>
<rect x="865.45" y="396.78" width="1.10" height="9.79" fill="#b3b3ee"/>
<rect x="867.95" y="348.63" width="1.10" height="57.94" fill="#b3b3ee"/>
<rect x="871.45" y="388.62" width="1.10" height="17.95" fill="#b3b3ee"/>
<rect x="876.00" y="400.86" width="2.00" height="5.71" fill="#b3b3ee"/>
<rect x="877.95" y="396.78" width="1.10" height="14.69" fill="#b3b3ee"/>
<rect x="880.95" y="398.41" width="1.10" height="8.16" fill="#b3b3ee"/>
<rect x="883.95" y="398.41" width="1.10" height="8.16" fill="#b3b3ee"/>
<polyline points="822.40,409.02 823.80,409.02 824.20,413.92 829.00,413.92 831.00,405.75 850.00,405.75 850.00,406.98 851.50,406.98 851.50,405.75 877.00,405.75 877.00,406.98 878.50,406.98 878.50,405.75 885.00,405.75" fill="none" stroke="#0a0aa8" stroke-width="1.1" stroke-linejoin="miter"/>

<path d="M670.5,430.3V323.5" stroke="#5a5a5a" stroke-width="1"/>
<path d="M667.5,427.3H889.5" stroke="#5a5a5a" stroke-width="1.1"/>
<path d="M667.5,325.0L670.5,319.8L673.5,325.0Z" fill="#5a5a5a"/>
<path d="M887.5,424.3L892.8,427.3L887.5,430.3Z" fill="#5a5a5a"/>
<text x="665.2" y="350.30" text-anchor="end" font-family="Liberation Mono" font-weight="bold" font-size="8.6" fill="#111" textLength="14.4" lengthAdjust="spacingAndGlyphs">200</text>
<text x="665.2" y="391.11" text-anchor="end" font-family="Liberation Mono" font-weight="bold" font-size="8.6" fill="#111" textLength="14.4" lengthAdjust="spacingAndGlyphs">100</text>
<text x="721.97" y="437.90" font-family="Liberation Mono" font-weight="bold" font-size="8.3" fill="#111" textLength="34.9" lengthAdjust="spacingAndGlyphs">Week 25</text>
<text x="819.17" y="437.90" font-family="Liberation Mono" font-weight="bold" font-size="8.3" fill="#111" textLength="34.9" lengthAdjust="spacingAndGlyphs">Week 27</text>
<text transform="translate(904.2,311.0) rotate(90)" font-family="Liberation Mono" font-size="8.3" fill="#a8a8a8" textLength="110" lengthAdjust="spacingAndGlyphs">RRDTOOL / TOBI OETIKER</text>
<rect x="639.2" y="446.6" width="7.6" height="7" fill="#0000e6" stroke="#000080" stroke-width="0.4"/>
<text x="652.40" y="453.40" font-family="Liberation Mono" font-size="10.6" fill="#111" stroke="#111" stroke-width="0.2" textLength="23.5" lengthAdjust="spacingAndGlyphs">Ping</text>
<text x="710.02" y="453.40" font-family="Liberation Mono" font-size="10.6" fill="#111" stroke="#111" stroke-width="0.2" textLength="35.3" lengthAdjust="spacingAndGlyphs">4.8 ms</text>
<text x="780.24" y="453.40" font-family="Liberation Mono" font-size="10.6" fill="#111" stroke="#111" stroke-width="0.2" textLength="41.2" lengthAdjust="spacingAndGlyphs">53.8 ms</text>
<text x="855.26" y="453.40" font-family="Liberation Mono" font-size="10.6" fill="#111" stroke="#111" stroke-width="0.2" textLength="47.0" lengthAdjust="spacingAndGlyphs">204.1 ms</text>
<text x="640.80" y="465.10" font-family="Liberation Mono" font-size="10.6" fill="#111" stroke="#111" stroke-width="0.2" textLength="70.3" lengthAdjust="spacingAndGlyphs">56.4 ms Last</text>
<rect x="965.5" y="325.0" width="218.5" height="102.30000000000001" fill="#fff"/>
<path d="M963,421.50H1183.0" stroke="#cfcfcf" stroke-width="1" stroke-dasharray="1 1"/>
<path d="M963,413.50H1183.0" stroke="#cfcfcf" stroke-width="1" stroke-dasharray="1 1"/>
<path d="M963,405.50H1183.0" stroke="#cfcfcf" stroke-width="1" stroke-dasharray="1 1"/>
<path d="M963,396.50H1183.0" stroke="#cfcfcf" stroke-width="1" stroke-dasharray="1 1"/>
<path d="M963,380.50H1183.0" stroke="#cfcfcf" stroke-width="1" stroke-dasharray="1 1"/>
<path d="M963,372.50H1183.0" stroke="#cfcfcf" stroke-width="1" stroke-dasharray="1 1"/>
<path d="M963,364.50H1183.0" stroke="#cfcfcf" stroke-width="1" stroke-dasharray="1 1"/>
<path d="M963,356.50H1183.0" stroke="#cfcfcf" stroke-width="1" stroke-dasharray="1 1"/>
<path d="M963,339.50H1183.0" stroke="#cfcfcf" stroke-width="1" stroke-dasharray="1 1"/>
<path d="M963,331.50H1183.0" stroke="#cfcfcf" stroke-width="1" stroke-dasharray="1 1"/>
<path d="M963,388.50H1183.0" stroke="#e6bebe" stroke-width="1" stroke-dasharray="1 1"/>
<path d="M963,347.50H1183.0" stroke="#e6bebe" stroke-width="1" stroke-dasharray="1 1"/>
<path d="M975.50,324V430.3" stroke="#e6bebe" stroke-width="1" stroke-dasharray="1 1"/>
<path d="M993.50,324V430.3" stroke="#e6bebe" stroke-width="1" stroke-dasharray="1 1"/>
<path d="M1011.50,324V430.3" stroke="#e6bebe" stroke-width="1" stroke-dasharray="1 1"/>
<path d="M1029.50,324V430.3" stroke="#e6bebe" stroke-width="1" stroke-dasharray="1 1"/>
<path d="M1048.50,324V430.3" stroke="#e6bebe" stroke-width="1" stroke-dasharray="1 1"/>
<path d="M1066.50,324V430.3" stroke="#e6bebe" stroke-width="1" stroke-dasharray="1 1"/>
<path d="M1084.50,324V430.3" stroke="#e6bebe" stroke-width="1" stroke-dasharray="1 1"/>
<path d="M1100.50,324V430.3" stroke="#e6bebe" stroke-width="1" stroke-dasharray="1 1"/>
<path d="M1119.50,324V430.3" stroke="#e6bebe" stroke-width="1" stroke-dasharray="1 1"/>
<path d="M1136.50,324V430.3" stroke="#e6bebe" stroke-width="1" stroke-dasharray="1 1"/>
<path d="M1154.50,324V430.3" stroke="#e6bebe" stroke-width="1" stroke-dasharray="1 1"/>
<path d="M1172.50,324V430.3" stroke="#e6bebe" stroke-width="1" stroke-dasharray="1 1"/>
<rect x="1174.20" y="404.53" width="1.80" height="21.22" fill="#b3b3ee"/>
<rect x="1175.20" y="400.86" width="1.80" height="11.83" fill="#b3b3ee"/>
<rect x="1176.20" y="344.55" width="1.80" height="68.15" fill="#b3b3ee"/>
<rect x="1177.20" y="348.63" width="1.80" height="64.06" fill="#b3b3ee"/>
<rect x="1178.20" y="349.44" width="1.80" height="63.25" fill="#b3b3ee"/>
<rect x="1179.10" y="347.40" width="1.80" height="65.29" fill="#b3b3ee"/>
<polyline points="1174.60,413.10 1176.30,413.10 1177.00,406.57 1180.20,406.57" fill="none" stroke="#0a0aa8" stroke-width="1.1" stroke-linejoin="miter"/>

<path d="M965.5,430.3V323.5" stroke="#5a5a5a" stroke-width="1"/>
<path d="M962.5,427.3H1184.5" stroke="#5a5a5a" stroke-width="1.1"/>
<path d="M962.5,325.0L965.5,319.8L968.5,325.0Z" fill="#5a5a5a"/>
<path d="M1182.5,424.3L1187.8,427.3L1182.5,430.3Z" fill="#5a5a5a"/>
<text x="960.2" y="350.30" text-anchor="end" font-family="Liberation Mono" font-weight="bold" font-size="8.6" fill="#111" textLength="14.4" lengthAdjust="spacingAndGlyphs">200</text>
<text x="960.2" y="391.11" text-anchor="end" font-family="Liberation Mono" font-weight="bold" font-size="8.6" fill="#111" textLength="14.4" lengthAdjust="spacingAndGlyphs">100</text>
<text x="961.03" y="437.90" font-family="Liberation Mono" font-weight="bold" font-size="8.3" fill="#111" textLength="14.9" lengthAdjust="spacingAndGlyphs">Jul</text>
<text x="979.03" y="437.90" font-family="Liberation Mono" font-weight="bold" font-size="8.3" fill="#111" textLength="14.9" lengthAdjust="spacingAndGlyphs">Aug</text>
<text x="997.03" y="437.90" font-family="Liberation Mono" font-weight="bold" font-size="8.3" fill="#111" textLength="14.9" lengthAdjust="spacingAndGlyphs">Sep</text>
<text x="1015.03" y="437.90" font-family="Liberation Mono" font-weight="bold" font-size="8.3" fill="#111" textLength="14.9" lengthAdjust="spacingAndGlyphs">Oct</text>
<text x="1032.53" y="437.90" font-family="Liberation Mono" font-weight="bold" font-size="8.3" fill="#111" textLength="14.9" lengthAdjust="spacingAndGlyphs">Nov</text>
<text x="1050.03" y="437.90" font-family="Liberation Mono" font-weight="bold" font-size="8.3" fill="#111" textLength="14.9" lengthAdjust="spacingAndGlyphs">Dec</text>
<text x="1069.53" y="437.90" font-family="Liberation Mono" font-weight="bold" font-size="8.3" fill="#111" textLength="14.9" lengthAdjust="spacingAndGlyphs">Jan</text>
<text x="1087.53" y="437.90" font-family="Liberation Mono" font-weight="bold" font-size="8.3" fill="#111" textLength="14.9" lengthAdjust="spacingAndGlyphs">Feb</text>
<text x="1103.83" y="437.90" font-family="Liberation Mono" font-weight="bold" font-size="8.3" fill="#111" textLength="14.9" lengthAdjust="spacingAndGlyphs">Mar</text>
<text x="1121.83" y="437.90" font-family="Liberation Mono" font-weight="bold" font-size="8.3" fill="#111" textLength="14.9" lengthAdjust="spacingAndGlyphs">Apr</text>
<text x="1139.33" y="437.90" font-family="Liberation Mono" font-weight="bold" font-size="8.3" fill="#111" textLength="14.9" lengthAdjust="spacingAndGlyphs">May</text>
<text x="1157.33" y="437.90" font-family="Liberation Mono" font-weight="bold" font-size="8.3" fill="#111" textLength="14.9" lengthAdjust="spacingAndGlyphs">Jun</text>
<text transform="translate(1199.2,311.0) rotate(90)" font-family="Liberation Mono" font-size="8.3" fill="#a8a8a8" textLength="110" lengthAdjust="spacingAndGlyphs">RRDTOOL / TOBI OETIKER</text>
<rect x="934.2" y="446.6" width="7.6" height="7" fill="#0000e6" stroke="#000080" stroke-width="0.4"/>
<text x="947.40" y="453.40" font-family="Liberation Mono" font-size="10.6" fill="#111" stroke="#111" stroke-width="0.2" textLength="23.5" lengthAdjust="spacingAndGlyphs">Ping</text>
<text x="1005.02" y="453.40" font-family="Liberation Mono" font-size="10.6" fill="#111" stroke="#111" stroke-width="0.2" textLength="35.3" lengthAdjust="spacingAndGlyphs">4.8 ms</text>
<text x="1075.24" y="453.40" font-family="Liberation Mono" font-size="10.6" fill="#111" stroke="#111" stroke-width="0.2" textLength="41.2" lengthAdjust="spacingAndGlyphs">51.4 ms</text>
<text x="1150.26" y="453.40" font-family="Liberation Mono" font-size="10.6" fill="#111" stroke="#111" stroke-width="0.2" textLength="47.0" lengthAdjust="spacingAndGlyphs">204.1 ms</text>
<text x="935.80" y="465.10" font-family="Liberation Mono" font-size="10.6" fill="#111" stroke="#111" stroke-width="0.2" textLength="70.3" lengthAdjust="spacingAndGlyphs">55.7 ms Last</text>
<rect x="80.5" y="523.0" width="218.5" height="102.29999999999995" fill="#fff"/>
<path d="M78,619.50H298.0" stroke="#cfcfcf" stroke-width="1" stroke-dasharray="1 1"/>
<path d="M78,612.50H298.0" stroke="#cfcfcf" stroke-width="1" stroke-dasharray="1 1"/>
<path d="M78,605.50H298.0" stroke="#cfcfcf" stroke-width="1" stroke-dasharray="1 1"/>
<path d="M78,599.50H298.0" stroke="#cfcfcf" stroke-width="1" stroke-dasharray="1 1"/>
<path d="M78,585.50H298.0" stroke="#cfcfcf" stroke-width="1" stroke-dasharray="1 1"/>
<path d="M78,578.50H298.0" stroke="#cfcfcf" stroke-width="1" stroke-dasharray="1 1"/>
<path d="M78,572.50H298.0" stroke="#cfcfcf" stroke-width="1" stroke-dasharray="1 1"/>
<path d="M78,565.50H298.0" stroke="#cfcfcf" stroke-width="1" stroke-dasharray="1 1"/>
<path d="M78,552.50H298.0" stroke="#cfcfcf" stroke-width="1" stroke-dasharray="1 1"/>
<path d="M78,545.50H298.0" stroke="#cfcfcf" stroke-width="1" stroke-dasharray="1 1"/>
<path d="M78,538.50H298.0" stroke="#cfcfcf" stroke-width="1" stroke-dasharray="1 1"/>
<path d="M78,532.50H298.0" stroke="#cfcfcf" stroke-width="1" stroke-dasharray="1 1"/>
<path d="M81.50,522V627.3" stroke="#cfcfcf" stroke-width="1" stroke-dasharray="1 1"/>
<path d="M90.50,522V627.3" stroke="#cfcfcf" stroke-width="1" stroke-dasharray="1 1"/>
<path d="M108.50,522V627.3" stroke="#cfcfcf" stroke-width="1" stroke-dasharray="1 1"/>
<path d="M117.50,522V627.3" stroke="#cfcfcf" stroke-width="1" stroke-dasharray="1 1"/>
<path d="M125.50,522V627.3" stroke="#cfcfcf" stroke-width="1" stroke-dasharray="1 1"/>
<path d="M134.50,522V627.3" stroke="#cfcfcf" stroke-width="1" stroke-dasharray="1 1"/>
<path d="M143.50,522V627.3" stroke="#cfcfcf" stroke-width="1" stroke-dasharray="1 1"/>
<path d="M161.50,522V627.3" stroke="#cfcfcf" stroke-width="1" stroke-dasharray="1 1"/>
<path d="M170.50,522V627.3" stroke="#cfcfcf" stroke-width="1" stroke-dasharray="1 1"/>
<path d="M179.50,522V627.3" stroke="#cfcfcf" stroke-width="1" stroke-dasharray="1 1"/>
<path d="M188.50,522V627.3" stroke="#cfcfcf" stroke-width="1" stroke-dasharray="1 1"/>
<path d="M197.50,522V627.3" stroke="#cfcfcf" stroke-width="1" stroke-dasharray="1 1"/>
<path d="M215.50,522V627.3" stroke="#cfcfcf" stroke-width="1" stroke-dasharray="1 1"/>
<path d="M224.50,522V627.3" stroke="#cfcfcf" stroke-width="1" stroke-dasharray="1 1"/>
<path d="M233.50,522V627.3" stroke="#cfcfcf" stroke-width="1" stroke-dasharray="1 1"/>
<path d="M242.50,522V627.3" stroke="#cfcfcf" stroke-width="1" stroke-dasharray="1 1"/>
<path d="M251.50,522V627.3" stroke="#cfcfcf" stroke-width="1" stroke-dasharray="1 1"/>
<path d="M268.50,522V627.3" stroke="#cfcfcf" stroke-width="1" stroke-dasharray="1 1"/>
<path d="M277.50,522V627.3" stroke="#cfcfcf" stroke-width="1" stroke-dasharray="1 1"/>
<path d="M286.50,522V627.3" stroke="#cfcfcf" stroke-width="1" stroke-dasharray="1 1"/>
<path d="M78,592.50H298.0" stroke="#e6bebe" stroke-width="1" stroke-dasharray="1 1"/>
<path d="M78,558.50H298.0" stroke="#e6bebe" stroke-width="1" stroke-dasharray="1 1"/>
<path d="M78,525.50H298.0" stroke="#e6bebe" stroke-width="1" stroke-dasharray="1 1"/>
<path d="M99.50,522V628.3" stroke="#e6bebe" stroke-width="1" stroke-dasharray="1 1"/>
<path d="M152.50,522V628.3" stroke="#e6bebe" stroke-width="1" stroke-dasharray="1 1"/>
<path d="M206.50,522V628.3" stroke="#e6bebe" stroke-width="1" stroke-dasharray="1 1"/>
<path d="M260.50,522V628.3" stroke="#e6bebe" stroke-width="1" stroke-dasharray="1 1"/>
<rect x="96.50" y="618.61" width="3.00" height="5.02" fill="#b3b3ee"/>
<rect x="131.85" y="620.28" width="1.80" height="3.34" fill="#b3b3ee"/>
<rect x="160.00" y="619.28" width="19.00" height="4.35" fill="#b3b3ee"/>
<rect x="179.10" y="551.75" width="1.80" height="71.88" fill="#b3b3ee"/>
<rect x="191.85" y="618.61" width="1.80" height="5.02" fill="#b3b3ee"/>
<rect x="225.50" y="613.60" width="12.00" height="10.03" fill="#b3b3ee"/>
<rect x="227.60" y="611.26" width="1.80" height="12.37" fill="#b3b3ee"/>
<rect x="232.60" y="611.93" width="1.80" height="11.70" fill="#b3b3ee"/>
<rect x="241.35" y="613.60" width="1.80" height="10.03" fill="#b3b3ee"/>
<rect x="243.00" y="618.61" width="8.50" height="5.02" fill="#b3b3ee"/>
<rect x="264.00" y="558.43" width="3.00" height="65.20" fill="#b3b3ee"/>
<rect x="267.00" y="616.94" width="15.50" height="6.69" fill="#b3b3ee"/>
<rect x="272.00" y="613.60" width="4.00" height="10.03" fill="#b3b3ee"/>
<polyline points="80.80,622.63 96.70,622.63 96.70,620.62 99.20,620.62 99.20,622.63 179.00,622.63 179.00,618.61 181.00,618.61 181.00,622.63 226.00,622.63 226.00,620.62 237.50,620.62 237.50,622.63 242.00,622.63 242.00,621.29 246.00,621.29 246.00,622.63 264.40,622.63 264.40,602.57 267.00,602.57 267.00,622.63 267.00,622.63 267.00,621.29 282.30,621.29 282.30,622.63 295.10,622.63" fill="none" stroke="#0a0aa8" stroke-width="1.1" stroke-linejoin="miter"/>

<path d="M80.5,628.3V521.5" stroke="#5a5a5a" stroke-width="1"/>
<path d="M77.5,625.3H299.5" stroke="#5a5a5a" stroke-width="1.1"/>
<path d="M77.5,523.0L80.5,517.8L83.5,523.0Z" fill="#5a5a5a"/>
<path d="M297.5,622.3L302.8,625.3L297.5,628.3Z" fill="#5a5a5a"/>
<text x="75.2" y="527.90" text-anchor="end" font-family="Liberation Mono" font-weight="bold" font-size="8.6" fill="#111" textLength="9.6" lengthAdjust="spacingAndGlyphs">40</text>
<text x="75.2" y="561.33" text-anchor="end" font-family="Liberation Mono" font-weight="bold" font-size="8.6" fill="#111" textLength="9.6" lengthAdjust="spacingAndGlyphs">30</text>
<text x="75.2" y="594.77" text-anchor="end" font-family="Liberation Mono" font-weight="bold" font-size="8.6" fill="#111" textLength="9.6" lengthAdjust="spacingAndGlyphs">20</text>
<text x="75.2" y="628.20" text-anchor="end" font-family="Liberation Mono" font-weight="bold" font-size="8.6" fill="#111" textLength="9.6" lengthAdjust="spacingAndGlyphs">10</text>
<text x="131.09" y="635.90" font-family="Liberation Mono" font-weight="bold" font-size="8.3" fill="#111" textLength="44.8" lengthAdjust="spacingAndGlyphs">Wed 00:00</text>
<text x="239.09" y="635.90" font-family="Liberation Mono" font-weight="bold" font-size="8.3" fill="#111" textLength="44.8" lengthAdjust="spacingAndGlyphs">Wed 12:00</text>
<text transform="translate(314.2,509.0) rotate(90)" font-family="Liberation Mono" font-size="8.3" fill="#a8a8a8" textLength="110" lengthAdjust="spacingAndGlyphs">RRDTOOL / TOBI OETIKER</text>
<rect x="49.2" y="644.6" width="7.6" height="7" fill="#0000e6" stroke="#000080" stroke-width="0.4"/>
<text x="62.40" y="651.40" font-family="Liberation Mono" font-size="10.6" fill="#111" stroke="#111" stroke-width="0.2" textLength="23.5" lengthAdjust="spacingAndGlyphs">Ping</text>
<text x="115.70" y="651.40" font-family="Liberation Mono" font-size="10.6" fill="#111" stroke="#111" stroke-width="0.2" textLength="41.2" lengthAdjust="spacingAndGlyphs">10.6 ms</text>
<text x="193.40" y="651.40" font-family="Liberation Mono" font-size="10.6" fill="#111" stroke="#111" stroke-width="0.2" textLength="41.2" lengthAdjust="spacingAndGlyphs">11.0 ms</text>
<text x="270.70" y="651.40" font-family="Liberation Mono" font-size="10.6" fill="#111" stroke="#111" stroke-width="0.2" textLength="41.2" lengthAdjust="spacingAndGlyphs">32.0 ms</text>
<text x="50.80" y="663.10" font-family="Liberation Mono" font-size="10.6" fill="#111" stroke="#111" stroke-width="0.2" textLength="70.3" lengthAdjust="spacingAndGlyphs">10.9 ms Last</text>
<rect x="375.5" y="523.0" width="218.5" height="102.29999999999995" fill="#fff"/>
<path d="M373,619.50H593.0" stroke="#cfcfcf" stroke-width="1" stroke-dasharray="1 1"/>
<path d="M373,612.50H593.0" stroke="#cfcfcf" stroke-width="1" stroke-dasharray="1 1"/>
<path d="M373,605.50H593.0" stroke="#cfcfcf" stroke-width="1" stroke-dasharray="1 1"/>
<path d="M373,599.50H593.0" stroke="#cfcfcf" stroke-width="1" stroke-dasharray="1 1"/>
<path d="M373,585.50H593.0" stroke="#cfcfcf" stroke-width="1" stroke-dasharray="1 1"/>
<path d="M373,578.50H593.0" stroke="#cfcfcf" stroke-width="1" stroke-dasharray="1 1"/>
<path d="M373,572.50H593.0" stroke="#cfcfcf" stroke-width="1" stroke-dasharray="1 1"/>
<path d="M373,565.50H593.0" stroke="#cfcfcf" stroke-width="1" stroke-dasharray="1 1"/>
<path d="M373,552.50H593.0" stroke="#cfcfcf" stroke-width="1" stroke-dasharray="1 1"/>
<path d="M373,545.50H593.0" stroke="#cfcfcf" stroke-width="1" stroke-dasharray="1 1"/>
<path d="M373,538.50H593.0" stroke="#cfcfcf" stroke-width="1" stroke-dasharray="1 1"/>
<path d="M373,532.50H593.0" stroke="#cfcfcf" stroke-width="1" stroke-dasharray="1 1"/>
<path d="M400.50,522V627.3" stroke="#cfcfcf" stroke-width="1" stroke-dasharray="1 1"/>
<path d="M431.50,522V627.3" stroke="#cfcfcf" stroke-width="1" stroke-dasharray="1 1"/>
<path d="M461.50,522V627.3" stroke="#cfcfcf" stroke-width="1" stroke-dasharray="1 1"/>
<path d="M492.50,522V627.3" stroke="#cfcfcf" stroke-width="1" stroke-dasharray="1 1"/>
<path d="M523.50,522V627.3" stroke="#cfcfcf" stroke-width="1" stroke-dasharray="1 1"/>
<path d="M553.50,522V627.3" stroke="#cfcfcf" stroke-width="1" stroke-dasharray="1 1"/>
<path d="M584.50,522V627.3" stroke="#cfcfcf" stroke-width="1" stroke-dasharray="1 1"/>
<path d="M373,592.50H593.0" stroke="#e6bebe" stroke-width="1" stroke-dasharray="1 1"/>
<path d="M373,558.50H593.0" stroke="#e6bebe" stroke-width="1" stroke-dasharray="1 1"/>
<path d="M373,525.50H593.0" stroke="#e6bebe" stroke-width="1" stroke-dasharray="1 1"/>
<path d="M385.50,522V628.3" stroke="#e6bebe" stroke-width="1" stroke-dasharray="1 1"/>
<path d="M416.50,522V628.3" stroke="#e6bebe" stroke-width="1" stroke-dasharray="1 1"/>
<path d="M446.50,522V628.3" stroke="#e6bebe" stroke-width="1" stroke-dasharray="1 1"/>
<path d="M477.50,522V628.3" stroke="#e6bebe" stroke-width="1" stroke-dasharray="1 1"/>
<path d="M507.50,522V628.3" stroke="#e6bebe" stroke-width="1" stroke-dasharray="1 1"/>
<path d="M538.50,522V628.3" stroke="#e6bebe" stroke-width="1" stroke-dasharray="1 1"/>
<path d="M569.50,522V628.3" stroke="#e6bebe" stroke-width="1" stroke-dasharray="1 1"/>
<rect x="387.70" y="546.73" width="1.80" height="76.90" fill="#b3b3ee"/>
<rect x="386.50" y="606.91" width="3.50" height="16.72" fill="#b3b3ee"/>
<rect x="401.00" y="618.61" width="4.00" height="5.02" fill="#b3b3ee"/>
<rect x="409.50" y="549.07" width="1.80" height="74.56" fill="#b3b3ee"/>
<rect x="429.90" y="561.78" width="1.80" height="61.85" fill="#b3b3ee"/>
<rect x="433.60" y="615.27" width="1.80" height="8.36" fill="#b3b3ee"/>
<rect x="448.00" y="545.39" width="3.00" height="78.23" fill="#b3b3ee"/>
<rect x="468.10" y="544.39" width="1.80" height="79.24" fill="#b3b3ee"/>
<rect x="470.50" y="606.91" width="4.00" height="16.72" fill="#b3b3ee"/>
<rect x="477.95" y="554.42" width="1.80" height="69.21" fill="#b3b3ee"/>
<rect x="490.90" y="615.27" width="1.80" height="8.36" fill="#b3b3ee"/>
<rect x="501.70" y="615.27" width="1.80" height="8.36" fill="#b3b3ee"/>
<rect x="506.00" y="545.06" width="1.80" height="78.57" fill="#b3b3ee"/>
<rect x="527.00" y="613.60" width="5.00" height="10.03" fill="#b3b3ee"/>
<rect x="539.60" y="620.28" width="1.80" height="3.34" fill="#b3b3ee"/>
<rect x="557.00" y="545.06" width="1.80" height="78.57" fill="#b3b3ee"/>
<rect x="562.50" y="620.28" width="1.80" height="3.34" fill="#b3b3ee"/>
<rect x="573.20" y="551.75" width="1.80" height="71.88" fill="#b3b3ee"/>
<rect x="578.50" y="615.27" width="5.30" height="8.36" fill="#b3b3ee"/>
<rect x="585.30" y="557.76" width="1.80" height="65.86" fill="#b3b3ee"/>
<rect x="586.80" y="616.94" width="2.20" height="6.69" fill="#b3b3ee"/>
<polyline points="376.00,622.63 388.00,622.63 388.00,620.62 389.50,620.62 389.50,622.63 409.00,622.63 409.00,610.92 411.50,610.92 411.50,622.63 448.20,622.63 448.20,611.59 450.90,611.59 450.90,622.63 468.00,622.63 468.00,605.24 470.50,605.24 470.50,622.63 470.50,622.63 470.50,620.62 474.50,620.62 474.50,622.63 496.00,622.63 496.00,623.96 504.40,623.96 504.40,622.63 505.50,622.63 505.50,603.57 508.50,603.57 508.50,622.63 508.50,622.63 508.50,621.29 512.00,621.29 512.00,622.63 536.80,622.63 536.80,623.96 542.80,623.96 542.80,622.63 557.00,622.63 557.00,605.24 559.50,605.24 559.50,622.63 578.80,622.63 578.80,621.29 583.60,621.29 583.60,622.63 584.00,622.63 584.00,620.62 586.00,620.62 586.00,622.63 589.60,622.63" fill="none" stroke="#0a0aa8" stroke-width="1.1" stroke-linejoin="miter"/>

<path d="M375.5,628.3V521.5" stroke="#5a5a5a" stroke-width="1"/>
<path d="M372.5,625.3H594.5" stroke="#5a5a5a" stroke-width="1.1"/>
<path d="M372.5,523.0L375.5,517.8L378.5,523.0Z" fill="#5a5a5a"/>
<path d="M592.5,622.3L597.8,625.3L592.5,628.3Z" fill="#5a5a5a"/>
<text x="370.2" y="527.90" text-anchor="end" font-family="Liberation Mono" font-weight="bold" font-size="8.6" fill="#111" textLength="9.6" lengthAdjust="spacingAndGlyphs">40</text>
<text x="370.2" y="561.33" text-anchor="end" font-family="Liberation Mono" font-weight="bold" font-size="8.6" fill="#111" textLength="9.6" lengthAdjust="spacingAndGlyphs">30</text>
<text x="370.2" y="594.77" text-anchor="end" font-family="Liberation Mono" font-weight="bold" font-size="8.6" fill="#111" textLength="9.6" lengthAdjust="spacingAndGlyphs">20</text>
<text x="370.2" y="628.20" text-anchor="end" font-family="Liberation Mono" font-weight="bold" font-size="8.6" fill="#111" textLength="9.6" lengthAdjust="spacingAndGlyphs">10</text>
<text x="424.93" y="635.90" font-family="Liberation Mono" font-weight="bold" font-size="8.3" fill="#111" textLength="14.9" lengthAdjust="spacingAndGlyphs">Fri</text>
<text x="486.63" y="635.90" font-family="Liberation Mono" font-weight="bold" font-size="8.3" fill="#111" textLength="14.9" lengthAdjust="spacingAndGlyphs">Sun</text>
<text x="548.23" y="635.90" font-family="Liberation Mono" font-weight="bold" font-size="8.3" fill="#111" textLength="14.9" lengthAdjust="spacingAndGlyphs">Tue</text>
<text transform="translate(609.2,509.0) rotate(90)" font-family="Liberation Mono" font-size="8.3" fill="#a8a8a8" textLength="110" lengthAdjust="spacingAndGlyphs">RRDTOOL / TOBI OETIKER</text>
<rect x="344.2" y="644.6" width="7.6" height="7" fill="#0000e6" stroke="#000080" stroke-width="0.4"/>
<text x="357.40" y="651.40" font-family="Liberation Mono" font-size="10.6" fill="#111" stroke="#111" stroke-width="0.2" textLength="23.5" lengthAdjust="spacingAndGlyphs">Ping</text>
<text x="410.70" y="651.40" font-family="Liberation Mono" font-size="10.6" fill="#111" stroke="#111" stroke-width="0.2" textLength="41.2" lengthAdjust="spacingAndGlyphs">10.6 ms</text>
<text x="488.40" y="651.40" font-family="Liberation Mono" font-size="10.6" fill="#111" stroke="#111" stroke-width="0.2" textLength="41.2" lengthAdjust="spacingAndGlyphs">11.0 ms</text>
<text x="565.70" y="651.40" font-family="Liberation Mono" font-size="10.6" fill="#111" stroke="#111" stroke-width="0.2" textLength="41.2" lengthAdjust="spacingAndGlyphs">34.1 ms</text>
<text x="345.80" y="663.10" font-family="Liberation Mono" font-size="10.6" fill="#111" stroke="#111" stroke-width="0.2" textLength="70.3" lengthAdjust="spacingAndGlyphs">10.9 ms Last</text>
<rect x="670.5" y="523.0" width="218.5" height="102.29999999999995" fill="#fff"/>
<path d="M668,619.50H888.0" stroke="#cfcfcf" stroke-width="1" stroke-dasharray="1 1"/>
<path d="M668,612.50H888.0" stroke="#cfcfcf" stroke-width="1" stroke-dasharray="1 1"/>
<path d="M668,605.50H888.0" stroke="#cfcfcf" stroke-width="1" stroke-dasharray="1 1"/>
<path d="M668,599.50H888.0" stroke="#cfcfcf" stroke-width="1" stroke-dasharray="1 1"/>
<path d="M668,585.50H888.0" stroke="#cfcfcf" stroke-width="1" stroke-dasharray="1 1"/>
<path d="M668,578.50H888.0" stroke="#cfcfcf" stroke-width="1" stroke-dasharray="1 1"/>
<path d="M668,572.50H888.0" stroke="#cfcfcf" stroke-width="1" stroke-dasharray="1 1"/>
<path d="M668,565.50H888.0" stroke="#cfcfcf" stroke-width="1" stroke-dasharray="1 1"/>
<path d="M668,552.50H888.0" stroke="#cfcfcf" stroke-width="1" stroke-dasharray="1 1"/>
<path d="M668,545.50H888.0" stroke="#cfcfcf" stroke-width="1" stroke-dasharray="1 1"/>
<path d="M668,538.50H888.0" stroke="#cfcfcf" stroke-width="1" stroke-dasharray="1 1"/>
<path d="M668,532.50H888.0" stroke="#cfcfcf" stroke-width="1" stroke-dasharray="1 1"/>
<path d="M713.50,522V627.3" stroke="#cfcfcf" stroke-width="1" stroke-dasharray="1 1"/>
<path d="M762.50,522V627.3" stroke="#cfcfcf" stroke-width="1" stroke-dasharray="1 1"/>
<path d="M811.50,522V627.3" stroke="#cfcfcf" stroke-width="1" stroke-dasharray="1 1"/>
<path d="M859.50,522V627.3" stroke="#cfcfcf" stroke-width="1" stroke-dasharray="1 1"/>
<path d="M668,592.50H888.0" stroke="#e6bebe" stroke-width="1" stroke-dasharray="1 1"/>
<path d="M668,558.50H888.0" stroke="#e6bebe" stroke-width="1" stroke-dasharray="1 1"/>
<path d="M668,525.50H888.0" stroke="#e6bebe" stroke-width="1" stroke-dasharray="1 1"/>
<path d="M790.50,522V628.3" stroke="#e6bebe" stroke-width="1" stroke-dasharray="1 1"/>
<rect x="825.80" y="609.59" width="1.10" height="14.04" fill="#b3b3ee"/>
<rect x="828.70" y="549.07" width="1.10" height="74.56" fill="#b3b3ee"/>
<rect x="829.90" y="615.27" width="1.10" height="8.36" fill="#b3b3ee"/>
<rect x="835.90" y="611.93" width="1.10" height="11.70" fill="#b3b3ee"/>
<rect x="838.80" y="546.73" width="1.10" height="76.90" fill="#b3b3ee"/>
<rect x="843.80" y="549.07" width="1.10" height="74.56" fill="#b3b3ee"/>
<rect x="848.60" y="561.78" width="1.10" height="61.85" fill="#b3b3ee"/>
<rect x="849.10" y="615.27" width="1.10" height="8.36" fill="#b3b3ee"/>
<rect x="852.70" y="545.06" width="1.10" height="78.57" fill="#b3b3ee"/>
<rect x="856.80" y="544.06" width="1.10" height="79.57" fill="#b3b3ee"/>
<rect x="858.70" y="554.42" width="1.10" height="69.21" fill="#b3b3ee"/>
<rect x="857.50" y="608.58" width="1.10" height="15.05" fill="#b3b3ee"/>
<rect x="865.90" y="545.06" width="1.10" height="78.57" fill="#b3b3ee"/>
<rect x="870.70" y="613.60" width="1.10" height="10.03" fill="#b3b3ee"/>
<rect x="877.90" y="545.06" width="1.10" height="78.57" fill="#b3b3ee"/>
<rect x="880.80" y="551.75" width="1.10" height="71.88" fill="#b3b3ee"/>
<rect x="883.90" y="557.76" width="1.10" height="65.86" fill="#b3b3ee"/>
<rect x="822.00" y="620.28" width="62.50" height="3.34" fill="#b3b3ee"/>
<polyline points="822.00,622.29 843.00,622.29 843.00,618.61 844.50,618.61 844.50,622.29 852.00,622.29 852.00,617.94 853.50,617.94 853.50,622.29 856.30,622.29 856.30,616.94 857.80,616.94 857.80,622.29 865.40,622.29 865.40,615.27 866.90,615.27 866.90,622.29 872.50,622.29 872.50,624.30 874.00,624.30 874.00,622.29 877.40,622.29 877.40,616.94 878.90,616.94 878.90,622.29 884.40,622.29" fill="none" stroke="#0a0aa8" stroke-width="1.1" stroke-linejoin="miter"/>

<path d="M670.5,628.3V521.5" stroke="#5a5a5a" stroke-width="1"/>
<path d="M667.5,625.3H889.5" stroke="#5a5a5a" stroke-width="1.1"/>
<path d="M667.5,523.0L670.5,517.8L673.5,523.0Z" fill="#5a5a5a"/>
<path d="M887.5,622.3L892.8,625.3L887.5,628.3Z" fill="#5a5a5a"/>
<text x="665.2" y="527.90" text-anchor="end" font-family="Liberation Mono" font-weight="bold" font-size="8.6" fill="#111" textLength="9.6" lengthAdjust="spacingAndGlyphs">40</text>
<text x="665.2" y="561.33" text-anchor="end" font-family="Liberation Mono" font-weight="bold" font-size="8.6" fill="#111" textLength="9.6" lengthAdjust="spacingAndGlyphs">30</text>
<text x="665.2" y="594.77" text-anchor="end" font-family="Liberation Mono" font-weight="bold" font-size="8.6" fill="#111" textLength="9.6" lengthAdjust="spacingAndGlyphs">20</text>
<text x="665.2" y="628.20" text-anchor="end" font-family="Liberation Mono" font-weight="bold" font-size="8.6" fill="#111" textLength="9.6" lengthAdjust="spacingAndGlyphs">10</text>
<text x="721.97" y="635.90" font-family="Liberation Mono" font-weight="bold" font-size="8.3" fill="#111" textLength="34.9" lengthAdjust="spacingAndGlyphs">Week 25</text>
<text x="819.17" y="635.90" font-family="Liberation Mono" font-weight="bold" font-size="8.3" fill="#111" textLength="34.9" lengthAdjust="spacingAndGlyphs">Week 27</text>
<text transform="translate(904.2,509.0) rotate(90)" font-family="Liberation Mono" font-size="8.3" fill="#a8a8a8" textLength="110" lengthAdjust="spacingAndGlyphs">RRDTOOL / TOBI OETIKER</text>
<rect x="639.2" y="644.6" width="7.6" height="7" fill="#0000e6" stroke="#000080" stroke-width="0.4"/>
<text x="652.40" y="651.40" font-family="Liberation Mono" font-size="10.6" fill="#111" stroke="#111" stroke-width="0.2" textLength="23.5" lengthAdjust="spacingAndGlyphs">Ping</text>
<text x="705.70" y="651.40" font-family="Liberation Mono" font-size="10.6" fill="#111" stroke="#111" stroke-width="0.2" textLength="41.2" lengthAdjust="spacingAndGlyphs">10.6 ms</text>
<text x="783.40" y="651.40" font-family="Liberation Mono" font-size="10.6" fill="#111" stroke="#111" stroke-width="0.2" textLength="41.2" lengthAdjust="spacingAndGlyphs">11.0 ms</text>
<text x="860.70" y="651.40" font-family="Liberation Mono" font-size="10.6" fill="#111" stroke="#111" stroke-width="0.2" textLength="41.2" lengthAdjust="spacingAndGlyphs">34.1 ms</text>
<text x="640.80" y="663.10" font-family="Liberation Mono" font-size="10.6" fill="#111" stroke="#111" stroke-width="0.2" textLength="70.3" lengthAdjust="spacingAndGlyphs">11.3 ms Last</text>
<rect x="965.5" y="523.0" width="218.5" height="102.29999999999995" fill="#fff"/>
<path d="M963,619.50H1183.0" stroke="#cfcfcf" stroke-width="1" stroke-dasharray="1 1"/>
<path d="M963,612.50H1183.0" stroke="#cfcfcf" stroke-width="1" stroke-dasharray="1 1"/>
<path d="M963,605.50H1183.0" stroke="#cfcfcf" stroke-width="1" stroke-dasharray="1 1"/>
<path d="M963,599.50H1183.0" stroke="#cfcfcf" stroke-width="1" stroke-dasharray="1 1"/>
<path d="M963,585.50H1183.0" stroke="#cfcfcf" stroke-width="1" stroke-dasharray="1 1"/>
<path d="M963,578.50H1183.0" stroke="#cfcfcf" stroke-width="1" stroke-dasharray="1 1"/>
<path d="M963,572.50H1183.0" stroke="#cfcfcf" stroke-width="1" stroke-dasharray="1 1"/>
<path d="M963,565.50H1183.0" stroke="#cfcfcf" stroke-width="1" stroke-dasharray="1 1"/>
<path d="M963,552.50H1183.0" stroke="#cfcfcf" stroke-width="1" stroke-dasharray="1 1"/>
<path d="M963,545.50H1183.0" stroke="#cfcfcf" stroke-width="1" stroke-dasharray="1 1"/>
<path d="M963,538.50H1183.0" stroke="#cfcfcf" stroke-width="1" stroke-dasharray="1 1"/>
<path d="M963,532.50H1183.0" stroke="#cfcfcf" stroke-width="1" stroke-dasharray="1 1"/>
<path d="M963,592.50H1183.0" stroke="#e6bebe" stroke-width="1" stroke-dasharray="1 1"/>
<path d="M963,558.50H1183.0" stroke="#e6bebe" stroke-width="1" stroke-dasharray="1 1"/>
<path d="M963,525.50H1183.0" stroke="#e6bebe" stroke-width="1" stroke-dasharray="1 1"/>
<path d="M975.50,522V628.3" stroke="#e6bebe" stroke-width="1" stroke-dasharray="1 1"/>
<path d="M993.50,522V628.3" stroke="#e6bebe" stroke-width="1" stroke-dasharray="1 1"/>
<path d="M1011.50,522V628.3" stroke="#e6bebe" stroke-width="1" stroke-dasharray="1 1"/>
<path d="M1029.50,522V628.3" stroke="#e6bebe" stroke-width="1" stroke-dasharray="1 1"/>
<path d="M1048.50,522V628.3" stroke="#e6bebe" stroke-width="1" stroke-dasharray="1 1"/>
<path d="M1066.50,522V628.3" stroke="#e6bebe" stroke-width="1" stroke-dasharray="1 1"/>
<path d="M1084.50,522V628.3" stroke="#e6bebe" stroke-width="1" stroke-dasharray="1 1"/>
<path d="M1100.50,522V628.3" stroke="#e6bebe" stroke-width="1" stroke-dasharray="1 1"/>
<path d="M1119.50,522V628.3" stroke="#e6bebe" stroke-width="1" stroke-dasharray="1 1"/>
<path d="M1136.50,522V628.3" stroke="#e6bebe" stroke-width="1" stroke-dasharray="1 1"/>
<path d="M1154.50,522V628.3" stroke="#e6bebe" stroke-width="1" stroke-dasharray="1 1"/>
<path d="M1172.50,522V628.3" stroke="#e6bebe" stroke-width="1" stroke-dasharray="1 1"/>
<rect x="1174.20" y="609.59" width="1.80" height="14.04" fill="#b3b3ee"/>
<rect x="1175.60" y="546.73" width="2.00" height="76.90" fill="#b3b3ee"/>
<rect x="1177.60" y="544.06" width="2.60" height="79.57" fill="#b3b3ee"/>
<polyline points="1174.60,622.29 1177.00,622.29 1177.50,620.95 1180.00,620.95" fill="none" stroke="#0a0aa8" stroke-width="1.1" stroke-linejoin="miter"/>

<path d="M965.5,628.3V521.5" stroke="#5a5a5a" stroke-width="1"/>
<path d="M962.5,625.3H1184.5" stroke="#5a5a5a" stroke-width="1.1"/>
<path d="M962.5,523.0L965.5,517.8L968.5,523.0Z" fill="#5a5a5a"/>
<path d="M1182.5,622.3L1187.8,625.3L1182.5,628.3Z" fill="#5a5a5a"/>
<text x="960.2" y="527.90" text-anchor="end" font-family="Liberation Mono" font-weight="bold" font-size="8.6" fill="#111" textLength="9.6" lengthAdjust="spacingAndGlyphs">40</text>
<text x="960.2" y="561.33" text-anchor="end" font-family="Liberation Mono" font-weight="bold" font-size="8.6" fill="#111" textLength="9.6" lengthAdjust="spacingAndGlyphs">30</text>
<text x="960.2" y="594.77" text-anchor="end" font-family="Liberation Mono" font-weight="bold" font-size="8.6" fill="#111" textLength="9.6" lengthAdjust="spacingAndGlyphs">20</text>
<text x="960.2" y="628.20" text-anchor="end" font-family="Liberation Mono" font-weight="bold" font-size="8.6" fill="#111" textLength="9.6" lengthAdjust="spacingAndGlyphs">10</text>
<text x="961.03" y="635.90" font-family="Liberation Mono" font-weight="bold" font-size="8.3" fill="#111" textLength="14.9" lengthAdjust="spacingAndGlyphs">Jul</text>
<text x="979.03" y="635.90" font-family="Liberation Mono" font-weight="bold" font-size="8.3" fill="#111" textLength="14.9" lengthAdjust="spacingAndGlyphs">Aug</text>
<text x="997.03" y="635.90" font-family="Liberation Mono" font-weight="bold" font-size="8.3" fill="#111" textLength="14.9" lengthAdjust="spacingAndGlyphs">Sep</text>
<text x="1015.03" y="635.90" font-family="Liberation Mono" font-weight="bold" font-size="8.3" fill="#111" textLength="14.9" lengthAdjust="spacingAndGlyphs">Oct</text>
<text x="1032.53" y="635.90" font-family="Liberation Mono" font-weight="bold" font-size="8.3" fill="#111" textLength="14.9" lengthAdjust="spacingAndGlyphs">Nov</text>
<text x="1050.03" y="635.90" font-family="Liberation Mono" font-weight="bold" font-size="8.3" fill="#111" textLength="14.9" lengthAdjust="spacingAndGlyphs">Dec</text>
<text x="1069.53" y="635.90" font-family="Liberation Mono" font-weight="bold" font-size="8.3" fill="#111" textLength="14.9" lengthAdjust="spacingAndGlyphs">Jan</text>
<text x="1087.53" y="635.90" font-family="Liberation Mono" font-weight="bold" font-size="8.3" fill="#111" textLength="14.9" lengthAdjust="spacingAndGlyphs">Feb</text>
<text x="1103.83" y="635.90" font-family="Liberation Mono" font-weight="bold" font-size="8.3" fill="#111" textLength="14.9" lengthAdjust="spacingAndGlyphs">Mar</text>
<text x="1121.83" y="635.90" font-family="Liberation Mono" font-weight="bold" font-size="8.3" fill="#111" textLength="14.9" lengthAdjust="spacingAndGlyphs">Apr</text>
<text x="1139.33" y="635.90" font-family="Liberation Mono" font-weight="bold" font-size="8.3" fill="#111" textLength="14.9" lengthAdjust="spacingAndGlyphs">May</text>
<text x="1157.33" y="635.90" font-family="Liberation Mono" font-weight="bold" font-size="8.3" fill="#111" textLength="14.9" lengthAdjust="spacingAndGlyphs">Jun</text>
<text transform="translate(1199.2,509.0) rotate(90)" font-family="Liberation Mono" font-size="8.3" fill="#a8a8a8" textLength="110" lengthAdjust="spacingAndGlyphs">RRDTOOL / TOBI OETIKER</text>
<rect x="934.2" y="644.6" width="7.6" height="7" fill="#0000e6" stroke="#000080" stroke-width="0.4"/>
<text x="947.40" y="651.40" font-family="Liberation Mono" font-size="10.6" fill="#111" stroke="#111" stroke-width="0.2" textLength="23.5" lengthAdjust="spacingAndGlyphs">Ping</text>
<text x="1000.70" y="651.40" font-family="Liberation Mono" font-size="10.6" fill="#111" stroke="#111" stroke-width="0.2" textLength="41.2" lengthAdjust="spacingAndGlyphs">10.6 ms</text>
<text x="1078.40" y="651.40" font-family="Liberation Mono" font-size="10.6" fill="#111" stroke="#111" stroke-width="0.2" textLength="41.2" lengthAdjust="spacingAndGlyphs">11.0 ms</text>
<text x="1155.70" y="651.40" font-family="Liberation Mono" font-size="10.6" fill="#111" stroke="#111" stroke-width="0.2" textLength="41.2" lengthAdjust="spacingAndGlyphs">34.1 ms</text>
<text x="935.80" y="663.10" font-family="Liberation Mono" font-size="10.6" fill="#111" stroke="#111" stroke-width="0.2" textLength="70.3" lengthAdjust="spacingAndGlyphs">11.2 ms Last</text>
<rect x="80.5" y="721.0" width="218.5" height="102.29999999999995" fill="#fff"/>
<path d="M78,813.50H298.0" stroke="#cfcfcf" stroke-width="1" stroke-dasharray="1 1"/>
<path d="M78,793.50H298.0" stroke="#cfcfcf" stroke-width="1" stroke-dasharray="1 1"/>
<path d="M78,773.50H298.0" stroke="#cfcfcf" stroke-width="1" stroke-dasharray="1 1"/>
<path d="M78,753.50H298.0" stroke="#cfcfcf" stroke-width="1" stroke-dasharray="1 1"/>
<path d="M78,733.50H298.0" stroke="#cfcfcf" stroke-width="1" stroke-dasharray="1 1"/>
<path d="M92.50,720V825.3" stroke="#cfcfcf" stroke-width="1" stroke-dasharray="1 1"/>
<path d="M128.50,720V825.3" stroke="#cfcfcf" stroke-width="1" stroke-dasharray="1 1"/>
<path d="M146.50,720V825.3" stroke="#cfcfcf" stroke-width="1" stroke-dasharray="1 1"/>
<path d="M164.50,720V825.3" stroke="#cfcfcf" stroke-width="1" stroke-dasharray="1 1"/>
<path d="M200.50,720V825.3" stroke="#cfcfcf" stroke-width="1" stroke-dasharray="1 1"/>
<path d="M218.50,720V825.3" stroke="#cfcfcf" stroke-width="1" stroke-dasharray="1 1"/>
<path d="M236.50,720V825.3" stroke="#cfcfcf" stroke-width="1" stroke-dasharray="1 1"/>
<path d="M272.50,720V825.3" stroke="#cfcfcf" stroke-width="1" stroke-dasharray="1 1"/>
<path d="M290.50,720V825.3" stroke="#cfcfcf" stroke-width="1" stroke-dasharray="1 1"/>
<path d="M78,803.50H298.0" stroke="#e6bebe" stroke-width="1" stroke-dasharray="1 1"/>
<path d="M78,783.50H298.0" stroke="#e6bebe" stroke-width="1" stroke-dasharray="1 1"/>
<path d="M78,763.50H298.0" stroke="#e6bebe" stroke-width="1" stroke-dasharray="1 1"/>
<path d="M78,743.50H298.0" stroke="#e6bebe" stroke-width="1" stroke-dasharray="1 1"/>
<path d="M78,723.50H298.0" stroke="#e6bebe" stroke-width="1" stroke-dasharray="1 1"/>
<path d="M110.50,720V826.3" stroke="#e6bebe" stroke-width="1" stroke-dasharray="1 1"/>
<path d="M182.50,720V826.3" stroke="#e6bebe" stroke-width="1" stroke-dasharray="1 1"/>
<path d="M254.50,720V826.3" stroke="#e6bebe" stroke-width="1" stroke-dasharray="1 1"/>
<path d="M80.5,823.3H298" stroke="#6a2424" stroke-width="1.2"/>
<path d="M80.5,826.3V719.5" stroke="#5a5a5a" stroke-width="1"/>
<path d="M77.5,823.3H299.5" stroke="#5a5a5a" stroke-width="1.1"/>
<path d="M77.5,721.0L80.5,715.8L83.5,721.0Z" fill="#5a5a5a"/>
<path d="M297.5,820.3L302.8,823.3L297.5,826.3Z" fill="#5a5a5a"/>
<text x="75.2" y="725.90" text-anchor="end" font-family="Liberation Mono" font-weight="bold" font-size="8.6" fill="#111" textLength="14.4" lengthAdjust="spacingAndGlyphs">1.0</text>
<text x="75.2" y="745.96" text-anchor="end" font-family="Liberation Mono" font-weight="bold" font-size="8.6" fill="#111" textLength="14.4" lengthAdjust="spacingAndGlyphs">0.8</text>
<text x="75.2" y="766.02" text-anchor="end" font-family="Liberation Mono" font-weight="bold" font-size="8.6" fill="#111" textLength="14.4" lengthAdjust="spacingAndGlyphs">0.6</text>
<text x="75.2" y="786.08" text-anchor="end" font-family="Liberation Mono" font-weight="bold" font-size="8.6" fill="#111" textLength="14.4" lengthAdjust="spacingAndGlyphs">0.4</text>
<text x="75.2" y="806.14" text-anchor="end" font-family="Liberation Mono" font-weight="bold" font-size="8.6" fill="#111" textLength="14.4" lengthAdjust="spacingAndGlyphs">0.2</text>
<text x="75.2" y="826.20" text-anchor="end" font-family="Liberation Mono" font-weight="bold" font-size="8.6" fill="#111" textLength="14.4" lengthAdjust="spacingAndGlyphs">0.0</text>
<text x="99.15" y="833.90" font-family="Liberation Mono" font-weight="bold" font-size="8.3" fill="#111" textLength="24.9" lengthAdjust="spacingAndGlyphs">15:00</text>
<text x="171.15" y="833.90" font-family="Liberation Mono" font-weight="bold" font-size="8.3" fill="#111" textLength="24.9" lengthAdjust="spacingAndGlyphs">15:20</text>
<text x="243.25" y="833.90" font-family="Liberation Mono" font-weight="bold" font-size="8.3" fill="#111" textLength="24.9" lengthAdjust="spacingAndGlyphs">15:40</text>
<text transform="translate(314.2,707.0) rotate(90)" font-family="Liberation Mono" font-size="8.3" fill="#a8a8a8" textLength="110" lengthAdjust="spacingAndGlyphs">RRDTOOL / TOBI OETIKER</text>
<rect x="375.5" y="721.0" width="218.5" height="102.29999999999995" fill="#fff"/>
<path d="M373,813.50H593.0" stroke="#cfcfcf" stroke-width="1" stroke-dasharray="1 1"/>
<path d="M373,793.50H593.0" stroke="#cfcfcf" stroke-width="1" stroke-dasharray="1 1"/>
<path d="M373,773.50H593.0" stroke="#cfcfcf" stroke-width="1" stroke-dasharray="1 1"/>
<path d="M373,753.50H593.0" stroke="#cfcfcf" stroke-width="1" stroke-dasharray="1 1"/>
<path d="M373,733.50H593.0" stroke="#cfcfcf" stroke-width="1" stroke-dasharray="1 1"/>
<path d="M387.50,720V825.3" stroke="#cfcfcf" stroke-width="1" stroke-dasharray="1 1"/>
<path d="M423.50,720V825.3" stroke="#cfcfcf" stroke-width="1" stroke-dasharray="1 1"/>
<path d="M441.50,720V825.3" stroke="#cfcfcf" stroke-width="1" stroke-dasharray="1 1"/>
<path d="M459.50,720V825.3" stroke="#cfcfcf" stroke-width="1" stroke-dasharray="1 1"/>
<path d="M495.50,720V825.3" stroke="#cfcfcf" stroke-width="1" stroke-dasharray="1 1"/>
<path d="M513.50,720V825.3" stroke="#cfcfcf" stroke-width="1" stroke-dasharray="1 1"/>
<path d="M531.50,720V825.3" stroke="#cfcfcf" stroke-width="1" stroke-dasharray="1 1"/>
<path d="M567.50,720V825.3" stroke="#cfcfcf" stroke-width="1" stroke-dasharray="1 1"/>
<path d="M585.50,720V825.3" stroke="#cfcfcf" stroke-width="1" stroke-dasharray="1 1"/>
<path d="M373,803.50H593.0" stroke="#e6bebe" stroke-width="1" stroke-dasharray="1 1"/>
<path d="M373,783.50H593.0" stroke="#e6bebe" stroke-width="1" stroke-dasharray="1 1"/>
<path d="M373,763.50H593.0" stroke="#e6bebe" stroke-width="1" stroke-dasharray="1 1"/>
<path d="M373,743.50H593.0" stroke="#e6bebe" stroke-width="1" stroke-dasharray="1 1"/>
<path d="M373,723.50H593.0" stroke="#e6bebe" stroke-width="1" stroke-dasharray="1 1"/>
<path d="M405.50,720V826.3" stroke="#e6bebe" stroke-width="1" stroke-dasharray="1 1"/>
<path d="M477.50,720V826.3" stroke="#e6bebe" stroke-width="1" stroke-dasharray="1 1"/>
<path d="M549.50,720V826.3" stroke="#e6bebe" stroke-width="1" stroke-dasharray="1 1"/>
<path d="M375.5,823.3H593" stroke="#6a2424" stroke-width="1.2"/>
<path d="M375.5,826.3V719.5" stroke="#5a5a5a" stroke-width="1"/>
<path d="M372.5,823.3H594.5" stroke="#5a5a5a" stroke-width="1.1"/>
<path d="M372.5,721.0L375.5,715.8L378.5,721.0Z" fill="#5a5a5a"/>
<path d="M592.5,820.3L597.8,823.3L592.5,826.3Z" fill="#5a5a5a"/>
<text x="370.2" y="725.90" text-anchor="end" font-family="Liberation Mono" font-weight="bold" font-size="8.6" fill="#111" textLength="14.4" lengthAdjust="spacingAndGlyphs">1.0</text>
<text x="370.2" y="745.96" text-anchor="end" font-family="Liberation Mono" font-weight="bold" font-size="8.6" fill="#111" textLength="14.4" lengthAdjust="spacingAndGlyphs">0.8</text>
<text x="370.2" y="766.02" text-anchor="end" font-family="Liberation Mono" font-weight="bold" font-size="8.6" fill="#111" textLength="14.4" lengthAdjust="spacingAndGlyphs">0.6</text>
<text x="370.2" y="786.08" text-anchor="end" font-family="Liberation Mono" font-weight="bold" font-size="8.6" fill="#111" textLength="14.4" lengthAdjust="spacingAndGlyphs">0.4</text>
<text x="370.2" y="806.14" text-anchor="end" font-family="Liberation Mono" font-weight="bold" font-size="8.6" fill="#111" textLength="14.4" lengthAdjust="spacingAndGlyphs">0.2</text>
<text x="370.2" y="826.20" text-anchor="end" font-family="Liberation Mono" font-weight="bold" font-size="8.6" fill="#111" textLength="14.4" lengthAdjust="spacingAndGlyphs">0.0</text>
<text x="394.15" y="833.90" font-family="Liberation Mono" font-weight="bold" font-size="8.3" fill="#111" textLength="24.9" lengthAdjust="spacingAndGlyphs">15:00</text>
<text x="466.15" y="833.90" font-family="Liberation Mono" font-weight="bold" font-size="8.3" fill="#111" textLength="24.9" lengthAdjust="spacingAndGlyphs">15:20</text>
<text x="538.25" y="833.90" font-family="Liberation Mono" font-weight="bold" font-size="8.3" fill="#111" textLength="24.9" lengthAdjust="spacingAndGlyphs">15:40</text>
<text transform="translate(609.2,707.0) rotate(90)" font-family="Liberation Mono" font-size="8.3" fill="#a8a8a8" textLength="110" lengthAdjust="spacingAndGlyphs">RRDTOOL / TOBI OETIKER</text>
<rect x="670.5" y="721.0" width="218.5" height="102.29999999999995" fill="#fff"/>
<path d="M668,813.50H888.0" stroke="#cfcfcf" stroke-width="1" stroke-dasharray="1 1"/>
<path d="M668,793.50H888.0" stroke="#cfcfcf" stroke-width="1" stroke-dasharray="1 1"/>
<path d="M668,773.50H888.0" stroke="#cfcfcf" stroke-width="1" stroke-dasharray="1 1"/>
<path d="M668,753.50H888.0" stroke="#cfcfcf" stroke-width="1" stroke-dasharray="1 1"/>
<path d="M668,733.50H888.0" stroke="#cfcfcf" stroke-width="1" stroke-dasharray="1 1"/>
<path d="M682.50,720V825.3" stroke="#cfcfcf" stroke-width="1" stroke-dasharray="1 1"/>
<path d="M718.50,720V825.3" stroke="#cfcfcf" stroke-width="1" stroke-dasharray="1 1"/>
<path d="M736.50,720V825.3" stroke="#cfcfcf" stroke-width="1" stroke-dasharray="1 1"/>
<path d="M754.50,720V825.3" stroke="#cfcfcf" stroke-width="1" stroke-dasharray="1 1"/>
<path d="M790.50,720V825.3" stroke="#cfcfcf" stroke-width="1" stroke-dasharray="1 1"/>
<path d="M808.50,720V825.3" stroke="#cfcfcf" stroke-width="1" stroke-dasharray="1 1"/>
<path d="M826.50,720V825.3" stroke="#cfcfcf" stroke-width="1" stroke-dasharray="1 1"/>
<path d="M862.50,720V825.3" stroke="#cfcfcf" stroke-width="1" stroke-dasharray="1 1"/>
<path d="M880.50,720V825.3" stroke="#cfcfcf" stroke-width="1" stroke-dasharray="1 1"/>
<path d="M668,803.50H888.0" stroke="#e6bebe" stroke-width="1" stroke-dasharray="1 1"/>
<path d="M668,783.50H888.0" stroke="#e6bebe" stroke-width="1" stroke-dasharray="1 1"/>
<path d="M668,763.50H888.0" stroke="#e6bebe" stroke-width="1" stroke-dasharray="1 1"/>
<path d="M668,743.50H888.0" stroke="#e6bebe" stroke-width="1" stroke-dasharray="1 1"/>
<path d="M668,723.50H888.0" stroke="#e6bebe" stroke-width="1" stroke-dasharray="1 1"/>
<path d="M700.50,720V826.3" stroke="#e6bebe" stroke-width="1" stroke-dasharray="1 1"/>
<path d="M772.50,720V826.3" stroke="#e6bebe" stroke-width="1" stroke-dasharray="1 1"/>
<path d="M844.50,720V826.3" stroke="#e6bebe" stroke-width="1" stroke-dasharray="1 1"/>
<path d="M670.5,823.3H888" stroke="#6a2424" stroke-width="1.2"/>
<path d="M670.5,826.3V719.5" stroke="#5a5a5a" stroke-width="1"/>
<path d="M667.5,823.3H889.5" stroke="#5a5a5a" stroke-width="1.1"/>
<path d="M667.5,721.0L670.5,715.8L673.5,721.0Z" fill="#5a5a5a"/>
<path d="M887.5,820.3L892.8,823.3L887.5,826.3Z" fill="#5a5a5a"/>
<text x="665.2" y="725.90" text-anchor="end" font-family="Liberation Mono" font-weight="bold" font-size="8.6" fill="#111" textLength="14.4" lengthAdjust="spacingAndGlyphs">1.0</text>
<text x="665.2" y="745.96" text-anchor="end" font-family="Liberation Mono" font-weight="bold" font-size="8.6" fill="#111" textLength="14.4" lengthAdjust="spacingAndGlyphs">0.8</text>
<text x="665.2" y="766.02" text-anchor="end" font-family="Liberation Mono" font-weight="bold" font-size="8.6" fill="#111" textLength="14.4" lengthAdjust="spacingAndGlyphs">0.6</text>
<text x="665.2" y="786.08" text-anchor="end" font-family="Liberation Mono" font-weight="bold" font-size="8.6" fill="#111" textLength="14.4" lengthAdjust="spacingAndGlyphs">0.4</text>
<text x="665.2" y="806.14" text-anchor="end" font-family="Liberation Mono" font-weight="bold" font-size="8.6" fill="#111" textLength="14.4" lengthAdjust="spacingAndGlyphs">0.2</text>
<text x="665.2" y="826.20" text-anchor="end" font-family="Liberation Mono" font-weight="bold" font-size="8.6" fill="#111" textLength="14.4" lengthAdjust="spacingAndGlyphs">0.0</text>
<text x="689.15" y="833.90" font-family="Liberation Mono" font-weight="bold" font-size="8.3" fill="#111" textLength="24.9" lengthAdjust="spacingAndGlyphs">15:00</text>
<text x="761.15" y="833.90" font-family="Liberation Mono" font-weight="bold" font-size="8.3" fill="#111" textLength="24.9" lengthAdjust="spacingAndGlyphs">15:20</text>
<text x="833.25" y="833.90" font-family="Liberation Mono" font-weight="bold" font-size="8.3" fill="#111" textLength="24.9" lengthAdjust="spacingAndGlyphs">15:40</text>
<text transform="translate(904.2,707.0) rotate(90)" font-family="Liberation Mono" font-size="8.3" fill="#a8a8a8" textLength="110" lengthAdjust="spacingAndGlyphs">RRDTOOL / TOBI OETIKER</text>
<rect x="965.5" y="721.0" width="218.5" height="102.29999999999995" fill="#fff"/>
<path d="M963,813.50H1183.0" stroke="#cfcfcf" stroke-width="1" stroke-dasharray="1 1"/>
<path d="M963,793.50H1183.0" stroke="#cfcfcf" stroke-width="1" stroke-dasharray="1 1"/>
<path d="M963,773.50H1183.0" stroke="#cfcfcf" stroke-width="1" stroke-dasharray="1 1"/>
<path d="M963,753.50H1183.0" stroke="#cfcfcf" stroke-width="1" stroke-dasharray="1 1"/>
<path d="M963,733.50H1183.0" stroke="#cfcfcf" stroke-width="1" stroke-dasharray="1 1"/>
<path d="M977.50,720V825.3" stroke="#cfcfcf" stroke-width="1" stroke-dasharray="1 1"/>
<path d="M1013.50,720V825.3" stroke="#cfcfcf" stroke-width="1" stroke-dasharray="1 1"/>
<path d="M1031.50,720V825.3" stroke="#cfcfcf" stroke-width="1" stroke-dasharray="1 1"/>
<path d="M1049.50,720V825.3" stroke="#cfcfcf" stroke-width="1" stroke-dasharray="1 1"/>
<path d="M1085.50,720V825.3" stroke="#cfcfcf" stroke-width="1" stroke-dasharray="1 1"/>
<path d="M1103.50,720V825.3" stroke="#cfcfcf" stroke-width="1" stroke-dasharray="1 1"/>
<path d="M1121.50,720V825.3" stroke="#cfcfcf" stroke-width="1" stroke-dasharray="1 1"/>
<path d="M1157.50,720V825.3" stroke="#cfcfcf" stroke-width="1" stroke-dasharray="1 1"/>
<path d="M1175.50,720V825.3" stroke="#cfcfcf" stroke-width="1" stroke-dasharray="1 1"/>
<path d="M963,803.50H1183.0" stroke="#e6bebe" stroke-width="1" stroke-dasharray="1 1"/>
<path d="M963,783.50H1183.0" stroke="#e6bebe" stroke-width="1" stroke-dasharray="1 1"/>
<path d="M963,763.50H1183.0" stroke="#e6bebe" stroke-width="1" stroke-dasharray="1 1"/>
<path d="M963,743.50H1183.0" stroke="#e6bebe" stroke-width="1" stroke-dasharray="1 1"/>
<path d="M963,723.50H1183.0" stroke="#e6bebe" stroke-width="1" stroke-dasharray="1 1"/>
<path d="M995.50,720V826.3" stroke="#e6bebe" stroke-width="1" stroke-dasharray="1 1"/>
<path d="M1067.50,720V826.3" stroke="#e6bebe" stroke-width="1" stroke-dasharray="1 1"/>
<path d="M1139.50,720V826.3" stroke="#e6bebe" stroke-width="1" stroke-dasharray="1 1"/>
<path d="M965.5,823.3H1183" stroke="#6a2424" stroke-width="1.2"/>
<path d="M965.5,826.3V719.5" stroke="#5a5a5a" stroke-width="1"/>
<path d="M962.5,823.3H1184.5" stroke="#5a5a5a" stroke-width="1.1"/>
<path d="M962.5,721.0L965.5,715.8L968.5,721.0Z" fill="#5a5a5a"/>
<path d="M1182.5,820.3L1187.8,823.3L1182.5,826.3Z" fill="#5a5a5a"/>
<text x="960.2" y="725.90" text-anchor="end" font-family="Liberation Mono" font-weight="bold" font-size="8.6" fill="#111" textLength="14.4" lengthAdjust="spacingAndGlyphs">1.0</text>
<text x="960.2" y="745.96" text-anchor="end" font-family="Liberation Mono" font-weight="bold" font-size="8.6" fill="#111" textLength="14.4" lengthAdjust="spacingAndGlyphs">0.8</text>
<text x="960.2" y="766.02" text-anchor="end" font-family="Liberation Mono" font-weight="bold" font-size="8.6" fill="#111" textLength="14.4" lengthAdjust="spacingAndGlyphs">0.6</text>
<text x="960.2" y="786.08" text-anchor="end" font-family="Liberation Mono" font-weight="bold" font-size="8.6" fill="#111" textLength="14.4" lengthAdjust="spacingAndGlyphs">0.4</text>
<text x="960.2" y="806.14" text-anchor="end" font-family="Liberation Mono" font-weight="bold" font-size="8.6" fill="#111" textLength="14.4" lengthAdjust="spacingAndGlyphs">0.2</text>
<text x="960.2" y="826.20" text-anchor="end" font-family="Liberation Mono" font-weight="bold" font-size="8.6" fill="#111" textLength="14.4" lengthAdjust="spacingAndGlyphs">0.0</text>
<text x="984.15" y="833.90" font-family="Liberation Mono" font-weight="bold" font-size="8.3" fill="#111" textLength="24.9" lengthAdjust="spacingAndGlyphs">15:00</text>
<text x="1056.15" y="833.90" font-family="Liberation Mono" font-weight="bold" font-size="8.3" fill="#111" textLength="24.9" lengthAdjust="spacingAndGlyphs">15:20</text>
<text x="1128.25" y="833.90" font-family="Liberation Mono" font-weight="bold" font-size="8.3" fill="#111" textLength="24.9" lengthAdjust="spacingAndGlyphs">15:40</text>
<text transform="translate(1199.2,707.0) rotate(90)" font-family="Liberation Mono" font-size="8.3" fill="#a8a8a8" textLength="110" lengthAdjust="spacingAndGlyphs">RRDTOOL / TOBI OETIKER</text>
</svg>
<div class=t style='left:1017.7px;top:3.88px;font-family:"Liberation Sans", sans-serif;font-size:10.5px;font-weight:normal;line-height:1;color:#fff;transform:scaleX(1.0388);'>Logged in as <b>adama</b> <span style="color:#a9b8d8">(Logout)</span> via <b>IPv4</b></div>
<div class=t style='left:862.6px;top:42.66px;font-family:"Liberation Sans", sans-serif;font-size:11.700000000000001px;font-weight:bold;line-height:1;color:#666;transform:scaleX(1.0813);'>Devices :</div>
<div class=t style='left:933.5px;top:42.66px;font-family:"Liberation Sans", sans-serif;font-size:11.700000000000001px;font-weight:bold;line-height:1;color:#666;transform:scaleX(1.2065);'>17 (</div>
<div class=t style='left:964.5px;top:42.66px;font-family:"Liberation Sans", sans-serif;font-size:11.700000000000001px;font-weight:bold;line-height:1;color:#2a8a2a;transform:scaleX(1.1627);'>12 up</div>
<div class=t style='left:1003.5px;top:42.66px;font-family:"Liberation Sans", sans-serif;font-size:11.700000000000001px;font-weight:bold;line-height:1;color:#c0001e;transform:scaleX(1.1176);'>3 down</div>
<div class=t style='left:1053.0px;top:42.66px;font-family:"Liberation Sans", sans-serif;font-size:11.700000000000001px;font-weight:bold;line-height:1;color:#111;transform:scaleX(1.1595);'>2 ignored</div>
<div class=t style='left:1134.8px;top:42.66px;font-family:"Liberation Sans", sans-serif;font-size:11.700000000000001px;font-weight:bold;line-height:1;color:#666;transform:scaleX(1.1740);'>2 disabled )</div>
<div class=t style='left:879.5px;top:66.46px;font-family:"Liberation Sans", sans-serif;font-size:11.700000000000001px;font-weight:bold;line-height:1;color:#666;transform:scaleX(1.0536);'>Ports :</div>
<div class=t style='left:926.0px;top:66.46px;font-family:"Liberation Sans", sans-serif;font-size:11.700000000000001px;font-weight:bold;line-height:1;color:#666;transform:scaleX(1.1937);'>140 (</div>
<div class=t style='left:964.5px;top:66.46px;font-family:"Liberation Sans", sans-serif;font-size:11.700000000000001px;font-weight:bold;line-height:1;color:#2a8a2a;transform:scaleX(1.1627);'>89 up</div>
<div class=t style='left:1003.5px;top:66.46px;font-family:"Liberation Sans", sans-serif;font-size:11.700000000000001px;font-weight:bold;line-height:1;color:#c0001e;transform:scaleX(1.1176);'>3 down</div>
<div class=t style='left:1053.0px;top:66.46px;font-family:"Liberation Sans", sans-serif;font-size:11.700000000000001px;font-weight:bold;line-height:1;color:#111;transform:scaleX(1.1595);'>5 ignored</div>
<div class=t style='left:1119.6px;top:66.46px;font-family:"Liberation Sans", sans-serif;font-size:11.700000000000001px;font-weight:bold;line-height:1;color:#666;transform:scaleX(1.1517);'>42 shutdown )</div>
<div class=t style='left:62.4px;top:111.34px;font-family:"Liberation Sans", sans-serif;font-size:11.6px;font-weight:bold;line-height:1;color:#585858;transform:scaleX(1.1695);'>Overview</div>
<div class=t style='left:175.6px;top:111.34px;font-family:"Liberation Sans", sans-serif;font-size:11.6px;font-weight:bold;line-height:1;color:#585858;transform:scaleX(1.1381);'>Devices</div>
<div class=t style='left:278.5px;top:111.34px;font-family:"Liberation Sans", sans-serif;font-size:11.6px;font-weight:bold;line-height:1;color:#585858;transform:scaleX(1.1568);'>Services</div>
<div class=t style='left:386.3px;top:111.34px;font-family:"Liberation Sans", sans-serif;font-size:11.6px;font-weight:bold;line-height:1;color:#585858;transform:scaleX(1.1175);'>Locations</div>
<div class=t style='left:500.3px;top:111.34px;font-family:"Liberation Sans", sans-serif;font-size:11.6px;font-weight:bold;line-height:1;color:#585858;transform:scaleX(1.1268);'>Ports</div>
<div class=t style='left:586.5px;top:111.34px;font-family:"Liberation Sans", sans-serif;font-size:11.6px;font-weight:bold;line-height:1;color:#585858;transform:scaleX(1.1513);'>Health</div>
<div class=t style='left:680.3px;top:111.34px;font-family:"Liberation Sans", sans-serif;font-size:11.6px;font-weight:bold;line-height:1;color:#585858;transform:scaleX(1.0778);'>BGP Sessions</div>
<div class=t style='left:1162.0px;top:111.34px;font-family:"Liberation Sans", sans-serif;font-size:11.6px;font-weight:bold;line-height:1;color:#585858;transform:scaleX(1.1515);'>System</div>
<div class=t style='left:110.6px;top:154.20px;font-family:"Liberation Sans", sans-serif;font-size:20px;font-weight:bold;line-height:1;color:#1515cc;transform:scaleX(1.1747);'>alpha.memetic.org</div>
<div class=t style='left:110.6px;top:180.38px;font-family:"Liberation Sans", sans-serif;font-size:12.5px;font-weight:normal;line-height:1;color:#666;transform:scaleX(1.1516);'>Ovh, Paris, France</div>
<div class=t style='left:78.4px;top:215.63px;font-family:"Liberation Sans", sans-serif;font-size:12.9px;font-weight:normal;line-height:1;color:#333;transform:scaleX(1.1073);'>Overview</div>
<div class=t style='left:184.8px;top:215.63px;font-family:"Liberation Sans", sans-serif;font-size:12.9px;font-weight:normal;line-height:1;color:#333;transform:scaleX(1.0217);'>Graphs</div>
<div class=t style='left:274.3px;top:215.63px;font-family:"Liberation Sans", sans-serif;font-size:12.9px;font-weight:normal;line-height:1;color:#333;transform:scaleX(1.0948);'>Health</div>
<div class=t style='left:361.2px;top:215.63px;font-family:"Liberation Sans", sans-serif;font-size:12.9px;font-weight:normal;line-height:1;color:#333;transform:scaleX(1.0616);'>Apps</div>
<div class=t style='left:438.7px;top:215.63px;font-family:"Liberation Sans", sans-serif;font-size:12.9px;font-weight:normal;line-height:1;color:#333;transform:scaleX(1.0838);'>CollectD</div>
<div class=t style='left:537.2px;top:215.63px;font-family:"Liberation Sans", sans-serif;font-size:12.9px;font-weight:normal;line-height:1;color:#333;transform:scaleX(1.0999);'>Ports</div>
<div class=t style='left:616.4px;top:215.63px;font-family:"Liberation Sans", sans-serif;font-size:12.9px;font-weight:normal;line-height:1;color:#333;transform:scaleX(1.1899);'>Inventory</div>
<div class=t style='left:725.6px;top:215.63px;font-family:"Liberation Sans", sans-serif;font-size:12.9px;font-weight:normal;line-height:1;color:#333;transform:scaleX(1.1064);'>Services</div>
<div class=t style='left:826.0px;top:215.63px;font-family:"Liberation Sans", sans-serif;font-size:12.9px;font-weight:normal;line-height:1;color:#333;transform:scaleX(1.1263);'>Events</div>
<div class=t style='left:916.5px;top:215.63px;font-family:"Liberation Sans", sans-serif;font-size:12.9px;font-weight:normal;line-height:1;color:#333;transform:scaleX(1.0904);'>Syslog</div>
<div class=t style='left:1004.3px;top:215.63px;font-family:"Liberation Sans", sans-serif;font-size:12.9px;font-weight:normal;line-height:1;color:#333;transform:scaleX(1.1593);'>Settings</div>
<div class=t style='left:52.5px;top:252.95px;font-family:"Liberation Sans", sans-serif;font-size:13.0px;font-weight:normal;line-height:1;color:#2222a8;transform:scaleX(1.1207);'>cpu</div>
<div class=t style='left:93.3px;top:252.95px;font-family:"Liberation Sans", sans-serif;font-size:13.0px;font-weight:normal;line-height:1;color:#2222a8;transform:scaleX(1.1389);'>cpufreq</div>
<div class=t style='left:160.0px;top:252.95px;font-family:"Liberation Sans", sans-serif;font-size:13.0px;font-weight:normal;line-height:1;color:#2222a8;transform:scaleX(1.2173);'>df</div>
<div class=t style='left:190.7px;top:252.95px;font-family:"Liberation Sans", sans-serif;font-size:13.0px;font-weight:normal;line-height:1;color:#2222a8;transform:scaleX(1.0378);'>disk</div>
<div class=t style='left:232.7px;top:252.95px;font-family:"Liberation Sans", sans-serif;font-size:13.0px;font-weight:normal;line-height:1;color:#2222a8;transform:scaleX(1.1458);'>entropy</div>
<div class=t style='left:300.3px;top:252.95px;font-family:"Liberation Sans", sans-serif;font-size:13.0px;font-weight:normal;line-height:1;color:#2222a8;transform:scaleX(1.1049);'>hddtemp</div>
<div class=t style='left:374.2px;top:252.95px;font-family:"Liberation Sans", sans-serif;font-size:13.0px;font-weight:normal;line-height:1;color:#2222a8;transform:scaleX(1.1649);'>interface</div>
<div class=t style='left:449.8px;top:252.95px;font-family:"Liberation Sans", sans-serif;font-size:13.0px;font-weight:normal;line-height:1;color:#2222a8;transform:scaleX(1.1139);'>irq</div>
<div class=t style='left:483.4px;top:252.95px;font-family:"Liberation Sans", sans-serif;font-size:13.0px;font-weight:normal;line-height:1;color:#2222a8;transform:scaleX(1.0538);'>load</div>
<div class=t style='left:527.3px;top:252.95px;font-family:"Liberation Sans", sans-serif;font-size:13.0px;font-weight:normal;line-height:1;color:#2222a8;transform:scaleX(1.0734);'>memory</div>
<div class=t style='left:595.8px;top:252.95px;font-family:"Liberation Sans", sans-serif;font-size:13.0px;font-weight:bold;line-height:1;color:#1a1ad0;transform:scaleX(1.0752);'>ping</div>
<div class=t style='left:642.1px;top:252.95px;font-family:"Liberation Sans", sans-serif;font-size:13.0px;font-weight:normal;line-height:1;color:#2222a8;transform:scaleX(1.1021);'>processes</div>
<div class=t style='left:725.4px;top:252.95px;font-family:"Liberation Sans", sans-serif;font-size:13.0px;font-weight:normal;line-height:1;color:#2222a8;transform:scaleX(1.1330);'>rrdcached</div>
<div class=t style='left:808.2px;top:252.95px;font-family:"Liberation Sans", sans-serif;font-size:13.0px;font-weight:normal;line-height:1;color:#2222a8;transform:scaleX(1.0903);'>swap</div>
<div class=t style='left:859.2px;top:252.95px;font-family:"Liberation Sans", sans-serif;font-size:13.0px;font-weight:normal;line-height:1;color:#2222a8;transform:scaleX(1.0819);'>users</div>
<div class=t style='left:911.8px;top:252.95px;font-family:"Liberation Sans", sans-serif;font-size:13.0px;font-weight:normal;line-height:1;color:#2222a8;transform:scaleX(1.0398);'>vmem</div>
<div class=t style='left:83.4px;top:251.75px;font-family:"Liberation Sans", sans-serif;font-size:13.0px;font-weight:normal;line-height:1;color:#777;'>|</div>
<div class=t style='left:150.6px;top:251.75px;font-family:"Liberation Sans", sans-serif;font-size:13.0px;font-weight:normal;line-height:1;color:#777;'>|</div>
<div class=t style='left:180.6px;top:251.75px;font-family:"Liberation Sans", sans-serif;font-size:13.0px;font-weight:normal;line-height:1;color:#777;'>|</div>
<div class=t style='left:222.6px;top:251.75px;font-family:"Liberation Sans", sans-serif;font-size:13.0px;font-weight:normal;line-height:1;color:#777;'>|</div>
<div class=t style='left:290.5px;top:251.75px;font-family:"Liberation Sans", sans-serif;font-size:13.0px;font-weight:normal;line-height:1;color:#777;'>|</div>
<div class=t style='left:364.3px;top:251.75px;font-family:"Liberation Sans", sans-serif;font-size:13.0px;font-weight:normal;line-height:1;color:#777;'>|</div>
<div class=t style='left:440.4px;top:251.75px;font-family:"Liberation Sans", sans-serif;font-size:13.0px;font-weight:normal;line-height:1;color:#777;'>|</div>
<div class=t style='left:473.5px;top:251.75px;font-family:"Liberation Sans", sans-serif;font-size:13.0px;font-weight:normal;line-height:1;color:#777;'>|</div>
<div class=t style='left:517.2px;top:251.75px;font-family:"Liberation Sans", sans-serif;font-size:13.0px;font-weight:normal;line-height:1;color:#777;'>|</div>
<div class=t style='left:585.6px;top:251.75px;font-family:"Liberation Sans", sans-serif;font-size:13.0px;font-weight:normal;line-height:1;color:#777;'>|</div>
<div class=t style='left:632.0px;top:251.75px;font-family:"Liberation Sans", sans-serif;font-size:13.0px;font-weight:normal;line-height:1;color:#777;'>|</div>
<div class=t style='left:715.5px;top:251.75px;font-family:"Liberation Sans", sans-serif;font-size:13.0px;font-weight:normal;line-height:1;color:#777;'>|</div>
<div class=t style='left:798.3px;top:251.75px;font-family:"Liberation Sans", sans-serif;font-size:13.0px;font-weight:normal;line-height:1;color:#777;'>|</div>
<div class=t style='left:849.2px;top:251.75px;font-family:"Liberation Sans", sans-serif;font-size:13.0px;font-weight:normal;line-height:1;color:#777;'>|</div>
<div class=t style='left:901.5px;top:251.75px;font-family:"Liberation Sans", sans-serif;font-size:13.0px;font-weight:normal;line-height:1;color:#777;'>|</div>
<div class=t style='left:44.3px;top:288.85px;font-family:"Liberation Sans", sans-serif;font-size:14.3px;font-weight:bold;line-height:1;color:#555;transform:scaleX(1.2074);'>ping - ping - www.clara.net</div>
<div class=t style='left:44.3px;top:486.85px;font-family:"Liberation Sans", sans-serif;font-size:14.3px;font-weight:bold;line-height:1;color:#555;transform:scaleX(1.2257);'>ping - ping - www.enta.net</div>
<div class=t style='left:44.3px;top:684.85px;font-family:"Liberation Sans", sans-serif;font-size:14.3px;font-weight:bold;line-height:1;color:#555;transform:scaleX(1.2183);'>ping - ping_droprate - www.clara.net</div>
</body></html>
